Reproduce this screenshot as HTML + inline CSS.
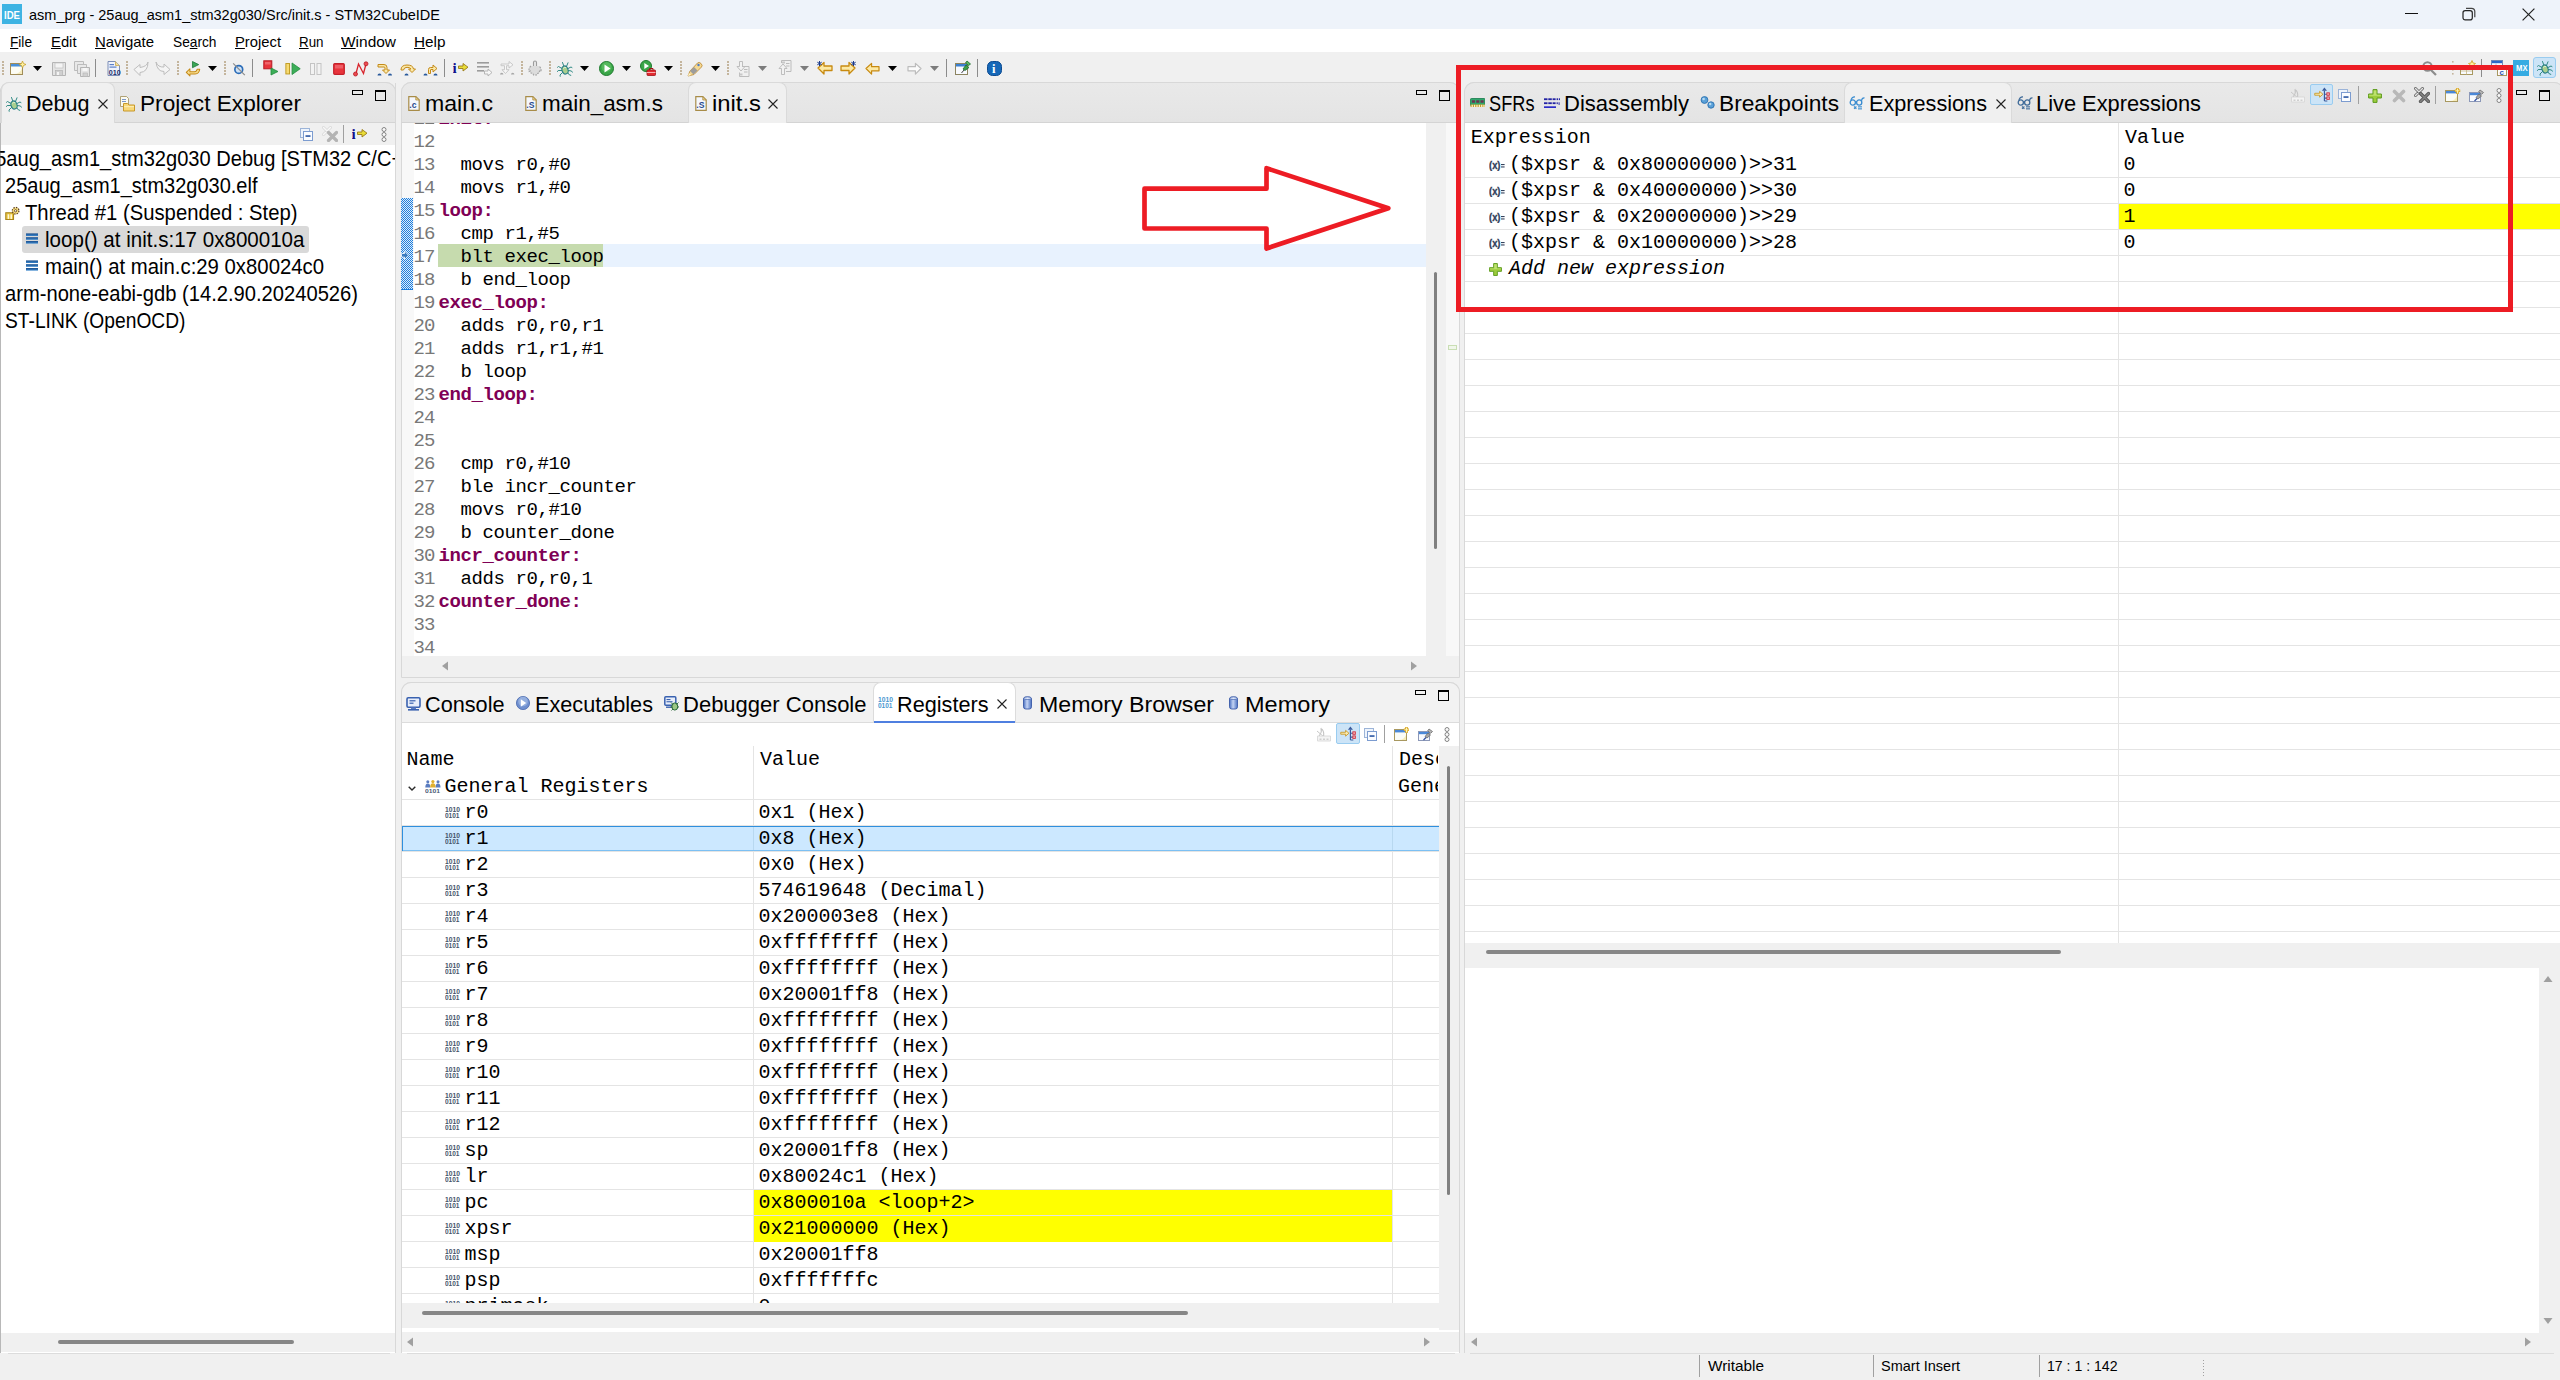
<!DOCTYPE html><html><head><meta charset="utf-8"><title>STM32CubeIDE</title><style>
html,body{margin:0;padding:0;overflow:hidden;}
#app{left:0;top:0;width:2560px;height:1380px;overflow:hidden;background:#f0f0f0;}
body{width:2560px;height:1380px;overflow:hidden;background:#f0f0f0;font-family:"Liberation Sans",sans-serif;position:relative;}
div,span.t,svg{position:absolute;box-sizing:border-box;}
span.t{white-space:pre;display:block;}
span.m{font-family:"Liberation Mono",monospace;}
u{text-decoration:underline;text-underline-offset:1px;text-decoration-thickness:1px;}
</style></head><body><div id="app"><div style="left:0px;top:0px;width:2560px;height:29px;background:#eef3fa;"></div><div style="left:2px;top:4px;width:20px;height:20px;background:#3db3e3;"></div><span class="t" style="left:4px;top:8.52px;height:13px;line-height:13px;font-size:10px;color:#fff;font-weight:700;transform:scaleX(0.9597);transform-origin:0 0;">IDE</span><span class="t" style="left:29px;top:4.50px;height:20px;line-height:20px;font-size:15px;color:#000;transform:scaleX(0.9666);transform-origin:0 0;">asm_prg - 25aug_asm1_stm32g030/Src/init.s - STM32CubeIDE</span><div style="left:2405px;top:13px;width:12.5px;height:1.2px;background:#111;"></div><svg style="left:2462px;top:7px;" width="14" height="14" viewBox="0 0 14 14"><rect x="1" y="3.600" width="9.300" height="9.300" rx="2.200" fill="none" stroke="#222" stroke-width="1.200"/><path d="M4 1.300h5.500a3.300 3.300 0 0 1 3.300 3.300v5.600" fill="none" stroke="#444" stroke-width="1.200"/></svg><svg style="left:2521.5px;top:7.5px;" width="13" height="13" viewBox="0 0 13 13"><path d="M0.600 0.600L12.400 12.400M12.400 0.600L0.600 12.400" stroke="#222" stroke-width="1.200"/></svg><div style="left:0px;top:29px;width:2560px;height:23px;background:#fff;"></div><span class="t" style="left:9.5px;top:32.00px;height:20px;line-height:20px;font-size:15px;color:#000;transform:scaleX(0.9096);transform-origin:0 0;"><u>F</u>ile</span><span class="t" style="left:50.5px;top:32.00px;height:20px;line-height:20px;font-size:15px;color:#000;transform:scaleX(0.9861);transform-origin:0 0;"><u>E</u>dit</span><span class="t" style="left:94.5px;top:32.00px;height:20px;line-height:20px;font-size:15px;color:#000;transform:scaleX(0.9963);transform-origin:0 0;"><u>N</u>avigate</span><span class="t" style="left:172.5px;top:32.00px;height:20px;line-height:20px;font-size:15px;color:#000;transform:scaleX(0.9149);transform-origin:0 0;">Se<u>a</u>rch</span><span class="t" style="left:234.5px;top:32.00px;height:20px;line-height:20px;font-size:15px;color:#000;transform:scaleX(0.9849);transform-origin:0 0;"><u>P</u>roject</span><span class="t" style="left:298.5px;top:32.00px;height:20px;line-height:20px;font-size:15px;color:#000;transform:scaleX(0.8899);transform-origin:0 0;"><u>R</u>un</span><span class="t" style="left:341px;top:32.00px;height:20px;line-height:20px;font-size:15px;color:#000;transform:scaleX(1.0304);transform-origin:0 0;"><u>W</u>indow</span><span class="t" style="left:414px;top:32.00px;height:20px;line-height:20px;font-size:15px;color:#000;transform:scaleX(1.0202);transform-origin:0 0;"><u>H</u>elp</span><div style="left:0px;top:52px;width:2560px;height:30px;background:#f0f0f0;"></div><svg style="left:2px;top:61px;" width="2" height="14" viewBox="0 0 2 14"><rect x="0" y="0" width="2" height="2" fill="#c4b59d"/><rect x="0" y="3" width="2" height="2" fill="#c4b59d"/><rect x="0" y="6" width="2" height="2" fill="#c4b59d"/><rect x="0" y="9" width="2" height="2" fill="#c4b59d"/><rect x="0" y="12" width="2" height="2" fill="#c4b59d"/></svg><svg style="left:10px;top:60.5px;" width="16" height="16" viewBox="0 0 16 16"><rect x="0.5" y="2.5" width="12" height="11" fill="#fdfdf5" stroke="#a08c58"/><rect x="1" y="3" width="11" height="2.5" fill="#4a90d9"/><path d="M12.5 0l1 2.5 2.5 1-2.5 1-1 2.5-1-2.5-2.5-1 2.5-1z" fill="#fff3a0" stroke="#c8a030" stroke-width="0.8"/><path d="M4 13q6 0 8-6v6z" fill="#f3e6b0" opacity=".8"/></svg><svg style="left:33px;top:66px;" width="9" height="5" viewBox="0 0 9 5"><path d="M0 0h9L4.5 5z" fill="#000"/></svg><svg style="left:51px;top:60.5px;" width="16" height="16" viewBox="0 0 16 16"><path d="M1.5 1.5h13v13h-13z" fill="#e4e4e4" stroke="#b4b4b4"/><rect x="4" y="2" width="8" height="5" fill="#f4f4f4" stroke="#c0c0c0" stroke-width=".7"/><rect x="4.5" y="9.5" width="7" height="5" fill="#d0d0d0" stroke="#b4b4b4" stroke-width=".7"/><rect x="6" y="11" width="2" height="3" fill="#f4f4f4"/></svg><svg style="left:74px;top:60.5px;" width="16" height="16" viewBox="0 0 16 16"><path d="M0.5 0.5h9v9h-9z" fill="#e8e8e8" stroke="#bcbcbc"/><path d="M3.5 3.5h9v9h-9z" fill="#e8e8e8" stroke="#bcbcbc"/><path d="M6.5 6.5h9v9h-9z" fill="#e4e4e4" stroke="#b4b4b4"/><rect x="8.5" y="7" width="5" height="3" fill="#f6f6f6"/><rect x="9" y="12" width="4.5" height="3.5" fill="#d0d0d0" stroke="#b4b4b4" stroke-width=".6"/></svg><div style="left:95px;top:59px;width:1px;height:18px;background:#8c8c8c;"></div><svg style="left:106px;top:60.5px;" width="15" height="15" viewBox="0 0 14 15"><path d="M1.5 0.5h7.5l4 4v10h-11.5z" fill="#eef2fb" stroke="#7c8eb8"/><path d="M9 0.5v4h4" fill="#f4dd9a" stroke="#c8a850" stroke-width=".8"/><rect x="3" y="3" width="4.5" height="1.2" fill="#5a7fc8"/><rect x="3" y="5.5" width="7" height="1.2" fill="#5a7fc8"/><text x="2.2" y="13.6" font-family="Liberation Sans" font-weight="700" font-size="7.2" fill="#1c2f6a">010</text></svg><svg style="left:126px;top:61px;" width="2" height="14" viewBox="0 0 2 14"><rect x="0" y="0" width="2" height="2" fill="#c4b59d"/><rect x="0" y="3" width="2" height="2" fill="#c4b59d"/><rect x="0" y="6" width="2" height="2" fill="#c4b59d"/><rect x="0" y="9" width="2" height="2" fill="#c4b59d"/><rect x="0" y="12" width="2" height="2" fill="#c4b59d"/></svg><svg style="left:133px;top:61px;" width="16" height="16" viewBox="0 0 16 16"><path d="M1 8.5L7 3.5v3q7-1 8-5.5 0 10-8 10.5v3z" fill="#f4f4f4" stroke="#bdbdbd" stroke-width="1" stroke-linejoin="round"/></svg><svg style="left:155px;top:61px;" width="16" height="16" viewBox="0 0 16 16"><path d="M15 8.5L9 13.5v-3q-7 0-8-9.5 2 5.5 8 5v-3z" fill="#f4f4f4" stroke="#bdbdbd" stroke-width="1" stroke-linejoin="round"/></svg><svg style="left:177px;top:61px;" width="2" height="14" viewBox="0 0 2 14"><rect x="0" y="0" width="2" height="2" fill="#c4b59d"/><rect x="0" y="3" width="2" height="2" fill="#c4b59d"/><rect x="0" y="6" width="2" height="2" fill="#c4b59d"/><rect x="0" y="9" width="2" height="2" fill="#c4b59d"/><rect x="0" y="12" width="2" height="2" fill="#c4b59d"/></svg><svg style="left:185px;top:60.5px;" width="16" height="16" viewBox="0 0 15 15.500"><path d="M7 0.5l6 3-6 3z" fill="#3aa655" stroke="#1e7a3a" stroke-width=".8"/><path d="M4.5 7.5L1 11l3.5 3.5v-2h5q4 0 4.5-4.5h-2.5q-.5 2.5-2.5 2.5h-4.5z" fill="#f8dc8c" stroke="#c48a18" stroke-width="1" stroke-linejoin="round"/></svg><svg style="left:208px;top:66px;" width="9" height="5" viewBox="0 0 9 5"><path d="M0 0h9L4.5 5z" fill="#000"/></svg><svg style="left:224px;top:61px;" width="2" height="14" viewBox="0 0 2 14"><rect x="0" y="0" width="2" height="2" fill="#c4b59d"/><rect x="0" y="3" width="2" height="2" fill="#c4b59d"/><rect x="0" y="6" width="2" height="2" fill="#c4b59d"/><rect x="0" y="9" width="2" height="2" fill="#c4b59d"/><rect x="0" y="12" width="2" height="2" fill="#c4b59d"/></svg><svg style="left:232px;top:61.5px;" width="14" height="14" viewBox="0 0 14.500 15"><circle cx="7" cy="8" r="4.2" fill="#cfe2f6" stroke="#2a6cb8" stroke-width="1.8"/><path d="M1 1.5L13.5 14" stroke="#8c8c8c" stroke-width="1.3"/></svg><div style="left:252px;top:59px;width:1px;height:18px;background:#8c8c8c;"></div><svg style="left:262.5px;top:60px;" width="16" height="16" viewBox="0 0 16 16"><rect x="0.8" y="0.8" width="8" height="8" fill="#e8343c" stroke="#b81c24" stroke-width="1"/><rect x="2" y="2" width="5.6" height="2.5" fill="#f4787c" opacity=".7"/><path d="M8 8l7 3.5-7 3.5z" fill="#3cae58" stroke="#1f8a3c" stroke-width=".8"/></svg><svg style="left:285px;top:62px;" width="16" height="13" viewBox="0 0 16 13.500"><rect x="0.6" y="1.6" width="3.8" height="10.8" fill="#f6da72" stroke="#c09a20" stroke-width="1"/><path d="M7 1l8.5 6-8.5 6z" fill="#3cae58" stroke="#1f8a3c" stroke-width=".8"/></svg><svg style="left:310px;top:63px;" width="12" height="12" viewBox="0 0 12 12"><rect x="0.5" y="0.5" width="4" height="11" fill="#f2f2f2" stroke="#c4c4c4"/><rect x="7" y="0.5" width="4" height="11" fill="#f2f2f2" stroke="#c4c4c4"/></svg><svg style="left:332.5px;top:62.5px;" width="12" height="12" viewBox="0 0 12 12"><rect x="0.7" y="0.7" width="10.6" height="10.6" rx="1" fill="#e8343c" stroke="#c4202a" stroke-width="1.2"/><rect x="2" y="2" width="8" height="3.5" fill="#f27a80" opacity=".6"/></svg><svg style="left:353px;top:60.5px;" width="16" height="16" viewBox="0 0 16 16"><path d="M3 12.5L5.5 3l5 9.5L13 3" fill="none" stroke="#d8242c" stroke-width="1.3" stroke-linejoin="miter"/><circle cx="2.5" cy="13" r="2" fill="#ec4a50" stroke="#b81c24" stroke-width=".8"/><circle cx="13" cy="2.8" r="2" fill="#ec4a50" stroke="#b81c24" stroke-width=".8"/></svg><svg style="left:377px;top:62.5px;" width="15.5" height="13" viewBox="0 0 15.500 13"><path d="M1 1.5h6q3 0 3 3v2.5h2.5L9 10.5 5.5 7H8v-2q0-1-1-1h-6z" fill="#fae8a8" stroke="#c48a18" stroke-width="1" stroke-linejoin="round"/><path d="M0.5 12.5a2 2 0 0 1 4 0z M11 12.5a2 2 0 0 1 4 0z" fill="#2a5a9c"/></svg><svg style="left:400px;top:62.5px;" width="16" height="13" viewBox="0 0 16 13"><path d="M1 7q0-5 6-5t6.5 4H15.500L12 9.500 8.500 6h2.500q-1-1.700-4-1.700t-3.500 2.700z" fill="#fae8a8" stroke="#c48a18" stroke-width="1" stroke-linejoin="round"/><path d="M4.500 12.500a2 2 0 0 1 4 0z" fill="#2a5a9c"/></svg><svg style="left:423px;top:62.5px;" width="15.5" height="13" viewBox="0 0 15.500 13"><path d="M5.500 10.500v-4q0-2 2-2h2.500v-2.500L14 5.500 10 9v-2.500h-2q-.500 0-.500.500v3.500z" fill="#fae8a8" stroke="#c48a18" stroke-width="1" stroke-linejoin="round"/><path d="M0.500 12.500a2 2 0 0 1 4 0z M10.500 12.500a2 2 0 0 1 4 0z" fill="#2a5a9c"/></svg><div style="left:444px;top:59px;width:1px;height:18px;background:#8c8c8c;"></div><svg style="left:452.5px;top:61px;" width="16" height="13" viewBox="0 0 16 13"><text x="-0.5" y="11.5" font-family="Liberation Serif" font-weight="700" font-size="15" fill="#10108c">i</text><path d="M5.500 5h4.500v-2.500L15 6.200 10 10v-2.500h-4.500z" fill="#e8dc38" stroke="#9a7a18" stroke-width=".9" stroke-linejoin="round"/></svg><svg style="left:477px;top:60.5px;" width="16" height="16" viewBox="0 0 16 16"><rect x="0" y="1" width="12" height="1.600" fill="#9c9c9c"/><rect x="0" y="5" width="12" height="1.600" fill="#9c9c9c"/><rect x="0" y="9" width="7" height="1.600" fill="#9c9c9c"/><path d="M7.500 10h3.500v-2L15 11.500 11 15v-2h-3.500z" fill="#f6f6f6" stroke="#b0b0b0" stroke-width=".9"/></svg><svg style="left:499.5px;top:61px;" width="16" height="15" viewBox="0 0 16 15"><path d="M1 3h8v-2.500L13 3.800 9 7v-2.300h-2.500v4h2.500l-3.500 3.800L2 8.700h2.500v-4h-3.500z" fill="#f6f6f6" stroke="#c4c4c4" stroke-width=".9"/><path d="M0 13.500a1.700 1.700 0 0 1 3.400 0z M11 13.500a1.700 1.700 0 0 1 3.400 0z" fill="#a8a8a8"/></svg><svg style="left:521px;top:61px;" width="2" height="14" viewBox="0 0 2 14"><rect x="0" y="0" width="2" height="2" fill="#c4b59d"/><rect x="0" y="3" width="2" height="2" fill="#c4b59d"/><rect x="0" y="6" width="2" height="2" fill="#c4b59d"/><rect x="0" y="9" width="2" height="2" fill="#c4b59d"/><rect x="0" y="12" width="2" height="2" fill="#c4b59d"/></svg><svg style="left:527.5px;top:60px;" width="16" height="16" viewBox="0 0 16 16"><path d="M5.500 9v-6.500a1.500 1.500 0 0 1 3 0v6.500" fill="#e8e8e8" stroke="#9c9c9c" stroke-width="1.100"/><path d="M3 6q-2.500 2-2 5.500l1.500-.500.500 2 2 .500.500 1.500h3l.500-1.500 2-.500.500-2 1.500.500q.500-3.500-2-5.500" fill="#dcdcdc" stroke="#a4a4a4" stroke-width="1.100" stroke-dasharray="2 1"/></svg><svg style="left:549px;top:61px;" width="2" height="14" viewBox="0 0 2 14"><rect x="0" y="0" width="2" height="2" fill="#c4b59d"/><rect x="0" y="3" width="2" height="2" fill="#c4b59d"/><rect x="0" y="6" width="2" height="2" fill="#c4b59d"/><rect x="0" y="9" width="2" height="2" fill="#c4b59d"/><rect x="0" y="12" width="2" height="2" fill="#c4b59d"/></svg><svg style="left:557px;top:60.5px;" width="16" height="16" viewBox="0 0 16 16"><g stroke="#2f8a84" stroke-width="1" fill="none" stroke-linecap="round"><path d="M7 5.500L5.500 1.500M9.500 5.500L11 1.800M5 7.500L1.500 5.500l-1 .8M4.800 9.500H1.200l-.7 1M5.500 11.500L3 14l.2 1.300M11 7.500l3-1.500 1 .6M11.300 9.500l3.200.5.800 1.200M10.500 11.500l2 2.500 1.300.300"/></g><ellipse cx="8" cy="9" rx="3" ry="4.100" transform="rotate(-20 8 9)" fill="#a9cf8e" stroke="#2a7f86" stroke-width="1.100"/><path d="M6.300 7.500q1.200-1.800 3-.800" stroke="#e6f4d8" stroke-width=".9" fill="none"/></svg><svg style="left:580px;top:66px;" width="9" height="5" viewBox="0 0 9 5"><path d="M0 0h9L4.5 5z" fill="#000"/></svg><svg style="left:598.5px;top:60.5px;" width="15" height="15" viewBox="0 0 15 15"><circle cx="7.500" cy="7.500" r="7" fill="#3aa648" stroke="#1e7a2e" stroke-width="1"/><circle cx="7.500" cy="6" r="5" fill="#6cc870" opacity=".55"/><path d="M5.500 3.500l6 4-6 4z" fill="#fff"/></svg><svg style="left:622px;top:66px;" width="9" height="5" viewBox="0 0 9 5"><path d="M0 0h9L4.5 5z" fill="#000"/></svg><svg style="left:640px;top:60px;" width="16" height="16" viewBox="0 0 16 16"><circle cx="6" cy="6" r="5.500" fill="#3aa648" stroke="#1e7a2e" stroke-width="1"/><path d="M4.300 3l4.700 3-4.700 3z" fill="#fff"/><rect x="7" y="10" width="8.500" height="5.500" rx=".8" fill="#e22a30" stroke="#a01018" stroke-width=".8"/><path d="M9.500 10v-1.500h3.500v1.500" fill="none" stroke="#a01018" stroke-width="1"/><rect x="7" y="12" width="8.500" height="1" fill="#f8b0b0"/></svg><svg style="left:664px;top:66px;" width="9" height="5" viewBox="0 0 9 5"><path d="M0 0h9L4.5 5z" fill="#000"/></svg><svg style="left:680px;top:61px;" width="2" height="14" viewBox="0 0 2 14"><rect x="0" y="0" width="2" height="2" fill="#c4b59d"/><rect x="0" y="3" width="2" height="2" fill="#c4b59d"/><rect x="0" y="6" width="2" height="2" fill="#c4b59d"/><rect x="0" y="9" width="2" height="2" fill="#c4b59d"/><rect x="0" y="12" width="2" height="2" fill="#c4b59d"/></svg><svg style="left:687px;top:60.5px;" width="16" height="16" viewBox="0 0 16 16"><path d="M1 15l2-5 7.500-8q1.500-1.500 3.500.500t.500 3.500l-7.500 7.500z" fill="#f4d890" stroke="#c09040" stroke-width=".9"/><path d="M3 10l3.500 3.500 4-4-3.500-3.500z" fill="#9c9c9c"/><path d="M1 15l1-3 2 2z" fill="#fff8d0"/><circle cx="11.500" cy="4" r="1.200" fill="#4a7ac8"/></svg><svg style="left:711px;top:66px;" width="9" height="5" viewBox="0 0 9 5"><path d="M0 0h9L4.5 5z" fill="#000"/></svg><svg style="left:727px;top:61px;" width="2" height="14" viewBox="0 0 2 14"><rect x="0" y="0" width="2" height="2" fill="#c4b59d"/><rect x="0" y="3" width="2" height="2" fill="#c4b59d"/><rect x="0" y="6" width="2" height="2" fill="#c4b59d"/><rect x="0" y="9" width="2" height="2" fill="#c4b59d"/><rect x="0" y="12" width="2" height="2" fill="#c4b59d"/></svg><svg style="left:735px;top:60.5px;" width="16" height="16" viewBox="0 0 16 16"><path d="M4.500 0.500h3v5h2.500l-4 4.500-4-4.500h2.500z" fill="#f2f2f2" stroke="#b8b8b8" stroke-width=".9"/><path d="M7 5.500h7v10h-9.500v-4" fill="none" stroke="#bcbcbc" stroke-width="1"/><rect x="9" y="8" width="3.500" height="1" fill="#bcbcbc"/><rect x="9" y="10.500" width="3.500" height="1" fill="#bcbcbc"/><rect x="4.500" y="12.500" width="3" height="2" fill="#c8c8c8"/></svg><svg style="left:758px;top:66px;" width="9" height="5" viewBox="0 0 9 5"><path d="M0 0h9L4.5 5z" fill="#7c7c7c"/></svg><svg style="left:777px;top:60px;" width="16" height="15" viewBox="0 0 16 15"><path d="M4.500 14.500h3v-6h2.500l-4-4.500-4 4.500h2.500z" fill="#f2f2f2" stroke="#b8b8b8" stroke-width=".9"/><path d="M4.500 3v-2.500h9.500v11h-5" fill="none" stroke="#bcbcbc" stroke-width="1"/><rect x="9" y="3" width="3.500" height="1" fill="#bcbcbc"/><rect x="9" y="5.500" width="3.500" height="1" fill="#bcbcbc"/><rect x="5" y="1.500" width="3" height="2" fill="#c8c8c8"/></svg><svg style="left:800px;top:66px;" width="9" height="5" viewBox="0 0 9 5"><path d="M0 0h9L4.5 5z" fill="#7c7c7c"/></svg><svg style="left:817px;top:61px;" width="16" height="14" viewBox="0 0 16 14"><path d="M1 7L7 1.500v3.500h8v4.500h-8v3.500z" fill="#fce9a4" stroke="#c88a10" stroke-width="1.300" stroke-linejoin="round"/><g stroke="#1c3c8c" stroke-width="1"><path d="M2.5 0v5M0.2999999999999998 1.200l4.400 2.600M4.7 1.200l-4.400 2.600"/></g></svg><svg style="left:840px;top:61px;" width="16" height="14" viewBox="0 0 16 14"><path d="M15 7L9 1.500v3.500h-8v4.500h8v3.500z" fill="#fce9a4" stroke="#c88a10" stroke-width="1.300" stroke-linejoin="round"/><g stroke="#1c3c8c" stroke-width="1"><path d="M13.5 0v5M11.3 1.200l4.400 2.600M15.7 1.200l-4.400 2.600"/></g></svg><svg style="left:865px;top:62px;" width="15" height="13" viewBox="0 0 16 14"><path d="M1 7L7 1.500v3.500h8v4.500h-8v3.500z" fill="#fce9a4" stroke="#c88a10" stroke-width="1.300" stroke-linejoin="round"/></svg><svg style="left:888px;top:66px;" width="9" height="5" viewBox="0 0 9 5"><path d="M0 0h9L4.5 5z" fill="#000"/></svg><svg style="left:907px;top:62px;" width="15" height="13" viewBox="0 0 16 14"><path d="M15 7L9 1.500v3.500h-8v4.500h8v3.500z" fill="#fbfbfb" stroke="#bcbcbc" stroke-width="1.300" stroke-linejoin="round"/></svg><svg style="left:930px;top:66px;" width="9" height="5" viewBox="0 0 9 5"><path d="M0 0h9L4.5 5z" fill="#7c7c7c"/></svg><div style="left:946px;top:59px;width:1px;height:18px;background:#8c8c8c;"></div><svg style="left:955px;top:60px;" width="16" height="16" viewBox="0 0 16 16"><rect x="0.500" y="3.500" width="12" height="11" fill="#f8fafe" stroke="#8c8460"/><rect x="1" y="4" width="11" height="2.500" fill="#3c80d0"/><path d="M8 9l3-4 3 2.500-4 3z" fill="#3ca048" stroke="#1c6a2c" stroke-width=".8"/><path d="M12 1l3.500 3-2 1.500-3-2.500z" fill="#58b860" stroke="#1c6a2c" stroke-width=".8"/><path d="M9 10l-2.500 3" stroke="#444" stroke-width="1"/></svg><div style="left:977px;top:59px;width:1px;height:18px;background:#8c8c8c;"></div><svg style="left:987px;top:60.5px;" width="15" height="15" viewBox="0 0 15 15"><rect x="0.500" y="0.500" width="14" height="14" rx="5" fill="#1668b8" stroke="#0c4a90" stroke-width="1"/><text x="5" y="12" font-family="Liberation Serif" font-weight="700" font-size="12.500" fill="#fff">i</text></svg><div style="left:0px;top:82px;width:396px;height:1271px;background:#fff;border:1px solid #d8d8d8;border-left-color:#b8b8b8;border-bottom:none;border-radius:10px 10px 0 0;"></div><div style="left:0px;top:82px;width:396px;height:41px;background:linear-gradient(#e9e9e9,#e4e4e4);border:1px solid #d8d8d8;border-bottom:1px solid #d4d4d4;border-radius:10px 10px 0 0;"></div><div style="left:1px;top:82px;width:114px;height:41px;background:#f0f0f0;border:1px solid #dadada;border-bottom:none;border-radius:8px 8px 0 0;"></div><span class="t" style="left:25.5px;top:89.01px;height:29px;line-height:29px;font-size:22px;color:#000;transform:scaleX(0.9793);transform-origin:0 0;">Debug</span><svg style="left:98px;top:98.5px;" width="10" height="10" viewBox="0 0 10 10"><path d="M0.5 0.5L9.5 9.5M9.5 0.5L0.5 9.5" stroke="#222" stroke-width="1.1"/></svg><span class="t" style="left:139.5px;top:89.01px;height:29px;line-height:29px;font-size:22px;color:#000;transform:scaleX(1.0287);transform-origin:0 0;">Project Explorer</span><div style="left:352px;top:89.5px;width:11px;height:5px;border:1.2px solid #000;"></div><div style="left:375px;top:89.5px;width:11px;height:11px;border:1.2px solid #000;border-top-width:2.2px;"></div><div style="left:1px;top:123px;width:394px;height:22px;background:#f0f0f0;"></div><span class="t" style="left:-16.2px;top:145.00px;height:28px;line-height:28px;font-size:21.5px;color:#000;transform:scaleX(0.934);transform-origin:0 0;clip-path:inset(0 0 0 17.3px);">25aug_asm1_stm32g030 Debug [STM32 C/C++ Application]</span><span class="t" style="left:5px;top:172.00px;height:28px;line-height:28px;font-size:21.5px;color:#000;transform:scaleX(0.9306);transform-origin:0 0;">25aug_asm1_stm32g030.elf</span><span class="t" style="left:25px;top:199.00px;height:28px;line-height:28px;font-size:21.5px;color:#000;transform:scaleX(0.9421);transform-origin:0 0;">Thread #1 (Suspended : Step)</span><div style="left:22px;top:226px;width:287px;height:27px;background:#d9d9d9;border-radius:3px;"></div><span class="t" style="left:45px;top:226.00px;height:28px;line-height:28px;font-size:21.5px;color:#000;transform:scaleX(0.9564);transform-origin:0 0;">loop() at init.s:17 0x800010a</span><span class="t" style="left:45px;top:253.00px;height:28px;line-height:28px;font-size:21.5px;color:#000;transform:scaleX(0.9452);transform-origin:0 0;">main() at main.c:29 0x80024c0</span><span class="t" style="left:5px;top:280.00px;height:28px;line-height:28px;font-size:21.5px;color:#000;transform:scaleX(0.9375);transform-origin:0 0;">arm-none-eabi-gdb (14.2.90.20240526)</span><span class="t" style="left:5px;top:307.00px;height:28px;line-height:28px;font-size:21.5px;color:#000;transform:scaleX(0.8939);transform-origin:0 0;">ST-LINK (OpenOCD)</span><div style="left:1px;top:1333px;width:394px;height:19px;background:#f0f0f0;"></div><div style="left:58px;top:1340px;width:236px;height:4px;background:#868686;border-radius:2px;"></div><div style="left:395px;top:123px;width:6px;height:1230px;background:#f0f0f0;"></div><div style="left:395px;top:83px;width:1px;height:1270px;background:#d8d8d8;"></div><div style="left:401px;top:82px;width:1059px;height:596px;background:#fff;border:1px solid #d8d8d8;border-radius:10px 10px 0 0;"></div><div style="left:401px;top:82px;width:1059px;height:41px;background:linear-gradient(#e9e9e9,#e4e4e4);border:1px solid #d8d8d8;border-bottom:1px solid #d4d4d4;border-radius:10px 10px 0 0;"></div><div style="left:688px;top:82px;width:99px;height:41px;background:#f0f0f0;border:1px solid #dadada;border-bottom:none;border-radius:8px 8px 0 0;"></div><span class="t" style="left:424.5px;top:89.01px;height:29px;line-height:29px;font-size:22px;color:#000;transform:scaleX(1.0494);transform-origin:0 0;">main.c</span><span class="t" style="left:541.5px;top:89.01px;height:29px;line-height:29px;font-size:22px;color:#000;transform:scaleX(1.0203);transform-origin:0 0;">main_asm.s</span><span class="t" style="left:712px;top:89.01px;height:29px;line-height:29px;font-size:22px;color:#000;transform:scaleX(1.0829);transform-origin:0 0;">init.s</span><svg style="left:768px;top:98.5px;" width="10" height="10" viewBox="0 0 10 10"><path d="M0.5 0.5L9.5 9.5M9.5 0.5L0.5 9.5" stroke="#222" stroke-width="1.1"/></svg><div style="left:1416px;top:89.5px;width:11px;height:5px;border:1.2px solid #000;"></div><div style="left:1439px;top:89.5px;width:11px;height:11px;border:1.2px solid #000;border-top-width:2.2px;"></div><div style="left:402px;top:123px;width:1057px;height:533px;background:#fff;"></div><div style="left:402px;top:123px;width:12px;height:533px;background:#f8f8f8;"></div><div style="left:1426px;top:123px;width:20px;height:533px;background:#f0f0f0;"></div><div style="left:1446px;top:123px;width:13px;height:533px;background:#f8f8f8;"></div><div style="left:1434px;top:272px;width:3px;height:277px;background:#808080;border-radius:1.5px;"></div><div style="left:1448px;top:345px;width:9px;height:5px;background:#f0f6ea;border:1px solid #c9deb4;"></div><div style="left:438px;top:244px;width:988px;height:23px;background:#e8f2fe;"></div><div style="left:438px;top:244px;width:165px;height:23px;background:#c6dbae;"></div><div style="left:401px;top:198px;width:12px;height:92px;background:repeating-conic-gradient(#1f7edc 0% 25%, #dcecfb 0% 50%) 0 0/2px 2px;"></div><div style="left:401px;top:289px;width:12px;height:1px;background:#1f7edc;"></div><svg style="left:400.5px;top:249.5px;" width="8" height="11" viewBox="0 0 8 11"><path d="M0.5 3.5h3v-2.6l4 4.4-4 4.4v-2.600h-3z" fill="#3b7cc0" stroke="#eef5fd" stroke-width="0.9"/></svg><span class="t m" style="left:413.5px;top:107.01px;height:25px;line-height:25px;font-size:19px;color:#787878;clip-path:inset(16.1px 0 0 0);letter-spacing:-1.000px;">11</span><span class="t m" style="left:438.5px;top:107.01px;height:25px;line-height:25px;font-size:19px;color:#7f0055;font-weight:700;clip-path:inset(16.1px 0 0 0);letter-spacing:-0.400px;">init:</span><span class="t m" style="left:413.5px;top:130.01px;height:25px;line-height:25px;font-size:19px;color:#787878;letter-spacing:-1.000px;">12</span><span class="t m" style="left:413.5px;top:153.01px;height:25px;line-height:25px;font-size:19px;color:#787878;letter-spacing:-1.000px;">13</span><span class="t m" style="left:438.5px;top:153.01px;height:25px;line-height:25px;font-size:19px;color:#000;letter-spacing:-0.400px;">  movs r0,#0</span><span class="t m" style="left:413.5px;top:176.01px;height:25px;line-height:25px;font-size:19px;color:#787878;letter-spacing:-1.000px;">14</span><span class="t m" style="left:438.5px;top:176.01px;height:25px;line-height:25px;font-size:19px;color:#000;letter-spacing:-0.400px;">  movs r1,#0</span><span class="t m" style="left:413.5px;top:199.01px;height:25px;line-height:25px;font-size:19px;color:#787878;letter-spacing:-1.000px;">15</span><span class="t m" style="left:438.5px;top:199.01px;height:25px;line-height:25px;font-size:19px;color:#7f0055;font-weight:700;letter-spacing:-0.400px;">loop:</span><span class="t m" style="left:413.5px;top:222.01px;height:25px;line-height:25px;font-size:19px;color:#787878;letter-spacing:-1.000px;">16</span><span class="t m" style="left:438.5px;top:222.01px;height:25px;line-height:25px;font-size:19px;color:#000;letter-spacing:-0.400px;">  cmp r1,#5</span><span class="t m" style="left:413.5px;top:245.01px;height:25px;line-height:25px;font-size:19px;color:#787878;letter-spacing:-1.000px;">17</span><span class="t m" style="left:438.5px;top:245.01px;height:25px;line-height:25px;font-size:19px;color:#000;letter-spacing:-0.400px;">  blt exec_loop</span><span class="t m" style="left:413.5px;top:268.01px;height:25px;line-height:25px;font-size:19px;color:#787878;letter-spacing:-1.000px;">18</span><span class="t m" style="left:438.5px;top:268.01px;height:25px;line-height:25px;font-size:19px;color:#000;letter-spacing:-0.400px;">  b end_loop</span><span class="t m" style="left:413.5px;top:291.01px;height:25px;line-height:25px;font-size:19px;color:#787878;letter-spacing:-1.000px;">19</span><span class="t m" style="left:438.5px;top:291.01px;height:25px;line-height:25px;font-size:19px;color:#7f0055;font-weight:700;letter-spacing:-0.400px;">exec_loop:</span><span class="t m" style="left:413.5px;top:314.01px;height:25px;line-height:25px;font-size:19px;color:#787878;letter-spacing:-1.000px;">20</span><span class="t m" style="left:438.5px;top:314.01px;height:25px;line-height:25px;font-size:19px;color:#000;letter-spacing:-0.400px;">  adds r0,r0,r1</span><span class="t m" style="left:413.5px;top:337.01px;height:25px;line-height:25px;font-size:19px;color:#787878;letter-spacing:-1.000px;">21</span><span class="t m" style="left:438.5px;top:337.01px;height:25px;line-height:25px;font-size:19px;color:#000;letter-spacing:-0.400px;">  adds r1,r1,#1</span><span class="t m" style="left:413.5px;top:360.01px;height:25px;line-height:25px;font-size:19px;color:#787878;letter-spacing:-1.000px;">22</span><span class="t m" style="left:438.5px;top:360.01px;height:25px;line-height:25px;font-size:19px;color:#000;letter-spacing:-0.400px;">  b loop</span><span class="t m" style="left:413.5px;top:383.01px;height:25px;line-height:25px;font-size:19px;color:#787878;letter-spacing:-1.000px;">23</span><span class="t m" style="left:438.5px;top:383.01px;height:25px;line-height:25px;font-size:19px;color:#7f0055;font-weight:700;letter-spacing:-0.400px;">end_loop:</span><span class="t m" style="left:413.5px;top:406.01px;height:25px;line-height:25px;font-size:19px;color:#787878;letter-spacing:-1.000px;">24</span><span class="t m" style="left:413.5px;top:429.01px;height:25px;line-height:25px;font-size:19px;color:#787878;letter-spacing:-1.000px;">25</span><span class="t m" style="left:413.5px;top:452.01px;height:25px;line-height:25px;font-size:19px;color:#787878;letter-spacing:-1.000px;">26</span><span class="t m" style="left:438.5px;top:452.01px;height:25px;line-height:25px;font-size:19px;color:#000;letter-spacing:-0.400px;">  cmp r0,#10</span><span class="t m" style="left:413.5px;top:475.01px;height:25px;line-height:25px;font-size:19px;color:#787878;letter-spacing:-1.000px;">27</span><span class="t m" style="left:438.5px;top:475.01px;height:25px;line-height:25px;font-size:19px;color:#000;letter-spacing:-0.400px;">  ble incr_counter</span><span class="t m" style="left:413.5px;top:498.01px;height:25px;line-height:25px;font-size:19px;color:#787878;letter-spacing:-1.000px;">28</span><span class="t m" style="left:438.5px;top:498.01px;height:25px;line-height:25px;font-size:19px;color:#000;letter-spacing:-0.400px;">  movs r0,#10</span><span class="t m" style="left:413.5px;top:521.01px;height:25px;line-height:25px;font-size:19px;color:#787878;letter-spacing:-1.000px;">29</span><span class="t m" style="left:438.5px;top:521.01px;height:25px;line-height:25px;font-size:19px;color:#000;letter-spacing:-0.400px;">  b counter_done</span><span class="t m" style="left:413.5px;top:544.01px;height:25px;line-height:25px;font-size:19px;color:#787878;letter-spacing:-1.000px;">30</span><span class="t m" style="left:438.5px;top:544.01px;height:25px;line-height:25px;font-size:19px;color:#7f0055;font-weight:700;letter-spacing:-0.400px;">incr_counter:</span><span class="t m" style="left:413.5px;top:567.01px;height:25px;line-height:25px;font-size:19px;color:#787878;letter-spacing:-1.000px;">31</span><span class="t m" style="left:438.5px;top:567.01px;height:25px;line-height:25px;font-size:19px;color:#000;letter-spacing:-0.400px;">  adds r0,r0,1</span><span class="t m" style="left:413.5px;top:590.01px;height:25px;line-height:25px;font-size:19px;color:#787878;letter-spacing:-1.000px;">32</span><span class="t m" style="left:438.5px;top:590.01px;height:25px;line-height:25px;font-size:19px;color:#7f0055;font-weight:700;letter-spacing:-0.400px;">counter_done:</span><span class="t m" style="left:413.5px;top:613.01px;height:25px;line-height:25px;font-size:19px;color:#787878;letter-spacing:-1.000px;">33</span><span class="t m" style="left:413.5px;top:636.01px;height:25px;line-height:25px;font-size:19px;color:#787878;letter-spacing:-1.000px;">34</span><div style="left:402px;top:656px;width:1024px;height:21px;background:#f0f0f0;"></div><svg style="left:441px;top:661px;" width="8" height="10" viewBox="0 0 8 10"><path d="M7 0.5L1 5l6 4.5z" fill="#a0a0a0"/></svg><svg style="left:1410px;top:661px;" width="8" height="10" viewBox="0 0 8 10"><path d="M1 0.5L7 5l-6 4.5z" fill="#a0a0a0"/></svg><div style="left:1426px;top:656px;width:33px;height:21px;background:#f0f0f0;"></div><div style="left:401px;top:682px;width:1059px;height:671px;background:#fff;border:1px solid #d8d8d8;border-bottom:none;border-radius:10px 10px 0 0;"></div><div style="left:401px;top:682px;width:1059px;height:41px;background:#f2f2f2;border:1px solid #d8d8d8;border-bottom:1px solid #dcdcdc;border-radius:10px 10px 0 0;"></div><div style="left:873px;top:682px;width:143px;height:41px;background:#fff;border:1px solid #dcdcdc;border-bottom:none;border-radius:8px 8px 0 0;"></div><div style="left:874px;top:721px;width:141px;height:2px;background:#4f7fe0;"></div><span class="t" style="left:424.5px;top:690.01px;height:29px;line-height:29px;font-size:22px;color:#000;transform:scaleX(0.9849);transform-origin:0 0;">Console</span><span class="t" style="left:535px;top:690.01px;height:29px;line-height:29px;font-size:22px;color:#000;transform:scaleX(0.9845);transform-origin:0 0;">Executables</span><span class="t" style="left:682.5px;top:690.01px;height:29px;line-height:29px;font-size:22px;color:#000;transform:scaleX(1.0002);transform-origin:0 0;">Debugger Console</span><span class="t" style="left:897px;top:690.01px;height:29px;line-height:29px;font-size:22px;color:#000;transform:scaleX(0.9847);transform-origin:0 0;">Registers</span><svg style="left:997px;top:699px;" width="10" height="10" viewBox="0 0 10 10"><path d="M0.5 0.5L9.5 9.5M9.5 0.5L0.5 9.5" stroke="#222" stroke-width="1.1"/></svg><span class="t" style="left:1039px;top:690.01px;height:29px;line-height:29px;font-size:22px;color:#000;transform:scaleX(1.0526);transform-origin:0 0;">Memory Browser</span><span class="t" style="left:1245px;top:690.01px;height:29px;line-height:29px;font-size:22px;color:#000;transform:scaleX(1.0698);transform-origin:0 0;">Memory</span><div style="left:1415px;top:689.5px;width:11px;height:5px;border:1.2px solid #000;"></div><div style="left:1438px;top:689.5px;width:11px;height:11px;border:1.2px solid #000;border-top-width:2.2px;"></div><div style="left:402px;top:723px;width:1057px;height:23px;background:#fff;"></div><div style="left:402px;top:746px;width:1037px;height:557px;background:#fff;"></div><div style="left:1439px;top:746px;width:20px;height:584px;background:#f0f0f0;"></div><div style="left:1447px;top:766px;width:3px;height:429px;background:#808080;border-radius:1.5px;"></div><div style="left:753px;top:746px;width:1px;height:557px;background:#e4e4e4;"></div><div style="left:1392px;top:746px;width:1px;height:557px;background:#e4e4e4;"></div><div style="left:402px;top:799px;width:1037px;height:1px;background:#e4e4e4;"></div><div style="left:402px;top:825px;width:1037px;height:1px;background:#e4e4e4;"></div><div style="left:402px;top:851px;width:1037px;height:1px;background:#e4e4e4;"></div><div style="left:402px;top:877px;width:1037px;height:1px;background:#e4e4e4;"></div><div style="left:402px;top:903px;width:1037px;height:1px;background:#e4e4e4;"></div><div style="left:402px;top:929px;width:1037px;height:1px;background:#e4e4e4;"></div><div style="left:402px;top:955px;width:1037px;height:1px;background:#e4e4e4;"></div><div style="left:402px;top:981px;width:1037px;height:1px;background:#e4e4e4;"></div><div style="left:402px;top:1007px;width:1037px;height:1px;background:#e4e4e4;"></div><div style="left:402px;top:1033px;width:1037px;height:1px;background:#e4e4e4;"></div><div style="left:402px;top:1059px;width:1037px;height:1px;background:#e4e4e4;"></div><div style="left:402px;top:1085px;width:1037px;height:1px;background:#e4e4e4;"></div><div style="left:402px;top:1111px;width:1037px;height:1px;background:#e4e4e4;"></div><div style="left:402px;top:1137px;width:1037px;height:1px;background:#e4e4e4;"></div><div style="left:402px;top:1163px;width:1037px;height:1px;background:#e4e4e4;"></div><div style="left:402px;top:1189px;width:1037px;height:1px;background:#e4e4e4;"></div><div style="left:402px;top:1215px;width:1037px;height:1px;background:#e4e4e4;"></div><div style="left:402px;top:1241px;width:1037px;height:1px;background:#e4e4e4;"></div><div style="left:402px;top:1267px;width:1037px;height:1px;background:#e4e4e4;"></div><div style="left:402px;top:1293px;width:1037px;height:1px;background:#e4e4e4;"></div><div style="left:402px;top:826px;width:1037px;height:25px;background:#cce8ff;border-top:1px solid #2f8fdd;border-bottom:1px solid #7cc0f3;"></div><div style="left:753px;top:827px;width:1px;height:23px;background:#b8d8f0;"></div><div style="left:1392px;top:827px;width:1px;height:23px;background:#b8d8f0;"></div><div style="left:402px;top:826px;width:1px;height:25px;background:#2f8fdd;"></div><div style="left:754px;top:1190px;width:638px;height:25px;background:#ffff00;"></div><div style="left:754px;top:1216px;width:638px;height:26px;background:#ffff00;"></div><span class="t m" style="left:406.5px;top:747.01px;height:26px;line-height:26px;font-size:20px;color:#000;">Name</span><span class="t m" style="left:760px;top:747.01px;height:26px;line-height:26px;font-size:20px;color:#000;">Value</span><span class="t m" style="left:1399px;top:747.01px;height:26px;line-height:26px;font-size:20px;color:#000;clip-path:inset(0 9px 0 0);">Desc</span><span class="t m" style="left:444.5px;top:774.01px;height:26px;line-height:26px;font-size:20px;color:#000;">General Registers</span><span class="t m" style="left:1398px;top:774.01px;height:26px;line-height:26px;font-size:20px;color:#000;clip-path:inset(0 8px 0 0);">Gene</span><span class="t m" style="left:464.5px;top:800.01px;height:26px;line-height:26px;font-size:20px;color:#000;">r0</span><span class="t m" style="left:758.5px;top:800.01px;height:26px;line-height:26px;font-size:20px;color:#000;">0x1 (Hex)</span><span class="t m" style="left:464.5px;top:826.01px;height:26px;line-height:26px;font-size:20px;color:#000;">r1</span><span class="t m" style="left:758.5px;top:826.01px;height:26px;line-height:26px;font-size:20px;color:#000;">0x8 (Hex)</span><span class="t m" style="left:464.5px;top:852.01px;height:26px;line-height:26px;font-size:20px;color:#000;">r2</span><span class="t m" style="left:758.5px;top:852.01px;height:26px;line-height:26px;font-size:20px;color:#000;">0x0 (Hex)</span><span class="t m" style="left:464.5px;top:878.01px;height:26px;line-height:26px;font-size:20px;color:#000;">r3</span><span class="t m" style="left:758.5px;top:878.01px;height:26px;line-height:26px;font-size:20px;color:#000;">574619648 (Decimal)</span><span class="t m" style="left:464.5px;top:904.01px;height:26px;line-height:26px;font-size:20px;color:#000;">r4</span><span class="t m" style="left:758.5px;top:904.01px;height:26px;line-height:26px;font-size:20px;color:#000;">0x200003e8 (Hex)</span><span class="t m" style="left:464.5px;top:930.01px;height:26px;line-height:26px;font-size:20px;color:#000;">r5</span><span class="t m" style="left:758.5px;top:930.01px;height:26px;line-height:26px;font-size:20px;color:#000;">0xffffffff (Hex)</span><span class="t m" style="left:464.5px;top:956.01px;height:26px;line-height:26px;font-size:20px;color:#000;">r6</span><span class="t m" style="left:758.5px;top:956.01px;height:26px;line-height:26px;font-size:20px;color:#000;">0xffffffff (Hex)</span><span class="t m" style="left:464.5px;top:982.01px;height:26px;line-height:26px;font-size:20px;color:#000;">r7</span><span class="t m" style="left:758.5px;top:982.01px;height:26px;line-height:26px;font-size:20px;color:#000;">0x20001ff8 (Hex)</span><span class="t m" style="left:464.5px;top:1008.01px;height:26px;line-height:26px;font-size:20px;color:#000;">r8</span><span class="t m" style="left:758.5px;top:1008.01px;height:26px;line-height:26px;font-size:20px;color:#000;">0xffffffff (Hex)</span><span class="t m" style="left:464.5px;top:1034.01px;height:26px;line-height:26px;font-size:20px;color:#000;">r9</span><span class="t m" style="left:758.5px;top:1034.01px;height:26px;line-height:26px;font-size:20px;color:#000;">0xffffffff (Hex)</span><span class="t m" style="left:464.5px;top:1060.01px;height:26px;line-height:26px;font-size:20px;color:#000;">r10</span><span class="t m" style="left:758.5px;top:1060.01px;height:26px;line-height:26px;font-size:20px;color:#000;">0xffffffff (Hex)</span><span class="t m" style="left:464.5px;top:1086.01px;height:26px;line-height:26px;font-size:20px;color:#000;">r11</span><span class="t m" style="left:758.5px;top:1086.01px;height:26px;line-height:26px;font-size:20px;color:#000;">0xffffffff (Hex)</span><span class="t m" style="left:464.5px;top:1112.01px;height:26px;line-height:26px;font-size:20px;color:#000;">r12</span><span class="t m" style="left:758.5px;top:1112.01px;height:26px;line-height:26px;font-size:20px;color:#000;">0xffffffff (Hex)</span><span class="t m" style="left:464.5px;top:1138.01px;height:26px;line-height:26px;font-size:20px;color:#000;">sp</span><span class="t m" style="left:758.5px;top:1138.01px;height:26px;line-height:26px;font-size:20px;color:#000;">0x20001ff8 (Hex)</span><span class="t m" style="left:464.5px;top:1164.01px;height:26px;line-height:26px;font-size:20px;color:#000;">lr</span><span class="t m" style="left:758.5px;top:1164.01px;height:26px;line-height:26px;font-size:20px;color:#000;">0x80024c1 (Hex)</span><span class="t m" style="left:464.5px;top:1190.01px;height:26px;line-height:26px;font-size:20px;color:#000;">pc</span><span class="t m" style="left:758.5px;top:1190.01px;height:26px;line-height:26px;font-size:20px;color:#000;">0x800010a &lt;loop+2&gt;</span><span class="t m" style="left:464.5px;top:1216.01px;height:26px;line-height:26px;font-size:20px;color:#000;">xpsr</span><span class="t m" style="left:758.5px;top:1216.01px;height:26px;line-height:26px;font-size:20px;color:#000;">0x21000000 (Hex)</span><span class="t m" style="left:464.5px;top:1242.01px;height:26px;line-height:26px;font-size:20px;color:#000;">msp</span><span class="t m" style="left:758.5px;top:1242.01px;height:26px;line-height:26px;font-size:20px;color:#000;">0x20001ff8</span><span class="t m" style="left:464.5px;top:1268.01px;height:26px;line-height:26px;font-size:20px;color:#000;">psp</span><span class="t m" style="left:758.5px;top:1268.01px;height:26px;line-height:26px;font-size:20px;color:#000;">0xfffffffc</span><span class="t m" style="left:464.5px;top:1294.01px;height:26px;line-height:26px;font-size:20px;color:#000;clip-path:inset(0 0 14px 0);">primask</span><span class="t m" style="left:758.5px;top:1294.01px;height:26px;line-height:26px;font-size:20px;color:#000;clip-path:inset(0 0 14px 0);">0</span><div style="left:402px;top:1303px;width:1037px;height:25px;background:#f0f0f0;"></div><div style="left:422px;top:1311px;width:766px;height:4px;background:#868686;border-radius:2px;"></div><div style="left:402px;top:1328px;width:1037px;height:4px;background:#fff;"></div><div style="left:402px;top:1332px;width:1057px;height:20px;background:#f0f0f0;"></div><svg style="left:406px;top:1337px;" width="8" height="10" viewBox="0 0 8 10"><path d="M7 0.5L1 5l6 4.5z" fill="#a0a0a0"/></svg><svg style="left:1423px;top:1337px;" width="8" height="10" viewBox="0 0 8 10"><path d="M1 0.5L7 5l-6 4.5z" fill="#a0a0a0"/></svg><div style="left:1464px;top:82px;width:1100px;height:1271px;background:#fff;border:1px solid #d8d8d8;border-bottom:none;border-radius:10px 10px 0 0;"></div><div style="left:1464px;top:82px;width:1100px;height:41px;background:linear-gradient(#e9e9e9,#e4e4e4);border:1px solid #d8d8d8;border-bottom:1px solid #d4d4d4;border-radius:10px 10px 0 0;"></div><div style="left:1844px;top:82px;width:168px;height:41px;background:#f0f0f0;border:1px solid #dadada;border-bottom:none;border-radius:8px 8px 0 0;"></div><span class="t" style="left:1488.5px;top:89.01px;height:29px;line-height:29px;font-size:22px;color:#000;transform:scaleX(0.8273);transform-origin:0 0;">SFRs</span><span class="t" style="left:1564px;top:89.01px;height:29px;line-height:29px;font-size:22px;color:#000;transform:scaleX(1.0024);transform-origin:0 0;">Disassembly</span><span class="t" style="left:1719px;top:89.01px;height:29px;line-height:29px;font-size:22px;color:#000;transform:scaleX(1.0328);transform-origin:0 0;">Breakpoints</span><span class="t" style="left:1869px;top:89.01px;height:29px;line-height:29px;font-size:22px;color:#000;transform:scaleX(0.9846);transform-origin:0 0;">Expressions</span><svg style="left:1996px;top:98.5px;" width="10" height="10" viewBox="0 0 10 10"><path d="M0.5 0.5L9.5 9.5M9.5 0.5L0.5 9.5" stroke="#222" stroke-width="1.1"/></svg><span class="t" style="left:2036px;top:89.01px;height:29px;line-height:29px;font-size:22px;color:#000;transform:scaleX(0.9921);transform-origin:0 0;">Live Expressions</span><div style="left:2516px;top:89.5px;width:11px;height:5px;border:1.2px solid #000;"></div><div style="left:2539px;top:89.5px;width:11px;height:11px;border:1.2px solid #000;border-top-width:2.2px;"></div><div style="left:1465px;top:123px;width:1095px;height:820px;background:#fff;"></div><div style="left:2118px;top:123px;width:1px;height:820px;background:#e4e4e4;"></div><div style="left:1465px;top:177px;width:1095px;height:1px;background:#e4e4e4;"></div><div style="left:1465px;top:203px;width:1095px;height:1px;background:#e4e4e4;"></div><div style="left:1465px;top:229px;width:1095px;height:1px;background:#e4e4e4;"></div><div style="left:1465px;top:255px;width:1095px;height:1px;background:#e4e4e4;"></div><div style="left:1465px;top:281px;width:1095px;height:1px;background:#e4e4e4;"></div><div style="left:1465px;top:307px;width:1095px;height:1px;background:#e4e4e4;"></div><div style="left:1465px;top:333px;width:1095px;height:1px;background:#e4e4e4;"></div><div style="left:1465px;top:359px;width:1095px;height:1px;background:#e4e4e4;"></div><div style="left:1465px;top:385px;width:1095px;height:1px;background:#e4e4e4;"></div><div style="left:1465px;top:411px;width:1095px;height:1px;background:#e4e4e4;"></div><div style="left:1465px;top:437px;width:1095px;height:1px;background:#e4e4e4;"></div><div style="left:1465px;top:463px;width:1095px;height:1px;background:#e4e4e4;"></div><div style="left:1465px;top:489px;width:1095px;height:1px;background:#e4e4e4;"></div><div style="left:1465px;top:515px;width:1095px;height:1px;background:#e4e4e4;"></div><div style="left:1465px;top:541px;width:1095px;height:1px;background:#e4e4e4;"></div><div style="left:1465px;top:567px;width:1095px;height:1px;background:#e4e4e4;"></div><div style="left:1465px;top:593px;width:1095px;height:1px;background:#e4e4e4;"></div><div style="left:1465px;top:619px;width:1095px;height:1px;background:#e4e4e4;"></div><div style="left:1465px;top:645px;width:1095px;height:1px;background:#e4e4e4;"></div><div style="left:1465px;top:671px;width:1095px;height:1px;background:#e4e4e4;"></div><div style="left:1465px;top:697px;width:1095px;height:1px;background:#e4e4e4;"></div><div style="left:1465px;top:723px;width:1095px;height:1px;background:#e4e4e4;"></div><div style="left:1465px;top:749px;width:1095px;height:1px;background:#e4e4e4;"></div><div style="left:1465px;top:775px;width:1095px;height:1px;background:#e4e4e4;"></div><div style="left:1465px;top:801px;width:1095px;height:1px;background:#e4e4e4;"></div><div style="left:1465px;top:827px;width:1095px;height:1px;background:#e4e4e4;"></div><div style="left:1465px;top:853px;width:1095px;height:1px;background:#e4e4e4;"></div><div style="left:1465px;top:879px;width:1095px;height:1px;background:#e4e4e4;"></div><div style="left:1465px;top:905px;width:1095px;height:1px;background:#e4e4e4;"></div><div style="left:1465px;top:931px;width:1095px;height:1px;background:#e4e4e4;"></div><div style="left:2119px;top:204px;width:441px;height:25px;background:#ffff00;"></div><span class="t m" style="left:1470.8px;top:125.01px;height:26px;line-height:26px;font-size:20px;color:#000;">Expression</span><span class="t m" style="left:2125px;top:125.01px;height:26px;line-height:26px;font-size:20px;color:#000;">Value</span><span class="t m" style="left:1509px;top:151.51px;height:26px;line-height:26px;font-size:20px;color:#000;">($xpsr &amp; 0x80000000)&gt;&gt;31</span><span class="t m" style="left:2123.5px;top:151.51px;height:26px;line-height:26px;font-size:20px;color:#000;">0</span><span class="t m" style="left:1509px;top:177.51px;height:26px;line-height:26px;font-size:20px;color:#000;">($xpsr &amp; 0x40000000)&gt;&gt;30</span><span class="t m" style="left:2123.5px;top:177.51px;height:26px;line-height:26px;font-size:20px;color:#000;">0</span><span class="t m" style="left:1509px;top:203.51px;height:26px;line-height:26px;font-size:20px;color:#000;">($xpsr &amp; 0x20000000)&gt;&gt;29</span><span class="t m" style="left:2123.5px;top:203.51px;height:26px;line-height:26px;font-size:20px;color:#000;">1</span><span class="t m" style="left:1509px;top:229.51px;height:26px;line-height:26px;font-size:20px;color:#000;">($xpsr &amp; 0x10000000)&gt;&gt;28</span><span class="t m" style="left:2123.5px;top:229.51px;height:26px;line-height:26px;font-size:20px;color:#000;">0</span><span class="t m" style="left:1509px;top:255.51px;height:26px;line-height:26px;font-size:20px;color:#000;font-style:italic;">Add new expression</span><div style="left:1465px;top:943px;width:1095px;height:25px;background:#f0f0f0;"></div><div style="left:1486px;top:950px;width:575px;height:4px;background:#868686;border-radius:2px;"></div><div style="left:1465px;top:968px;width:1074px;height:365px;background:#fff;"></div><div style="left:2539px;top:968px;width:21px;height:365px;background:#f0f0f0;"></div><svg style="left:2543px;top:975px;" width="10" height="8" viewBox="0 0 10 8"><path d="M5 1L0.5 7h9z" fill="#a0a0a0"/></svg><svg style="left:2543px;top:1317px;" width="10" height="8" viewBox="0 0 10 8"><path d="M5 7L0.5 1h9z" fill="#a0a0a0"/></svg><div style="left:1465px;top:1333px;width:1095px;height:20px;background:#f0f0f0;"></div><svg style="left:1470px;top:1337px;" width="8" height="10" viewBox="0 0 8 10"><path d="M7 0.5L1 5l6 4.5z" fill="#a0a0a0"/></svg><svg style="left:2524px;top:1337px;" width="8" height="10" viewBox="0 0 8 10"><path d="M1 0.5L7 5l-6 4.5z" fill="#a0a0a0"/></svg><div style="left:0px;top:1353px;width:2560px;height:27px;background:#f0f0f0;"></div><div style="left:8px;top:1353px;width:382px;height:1px;background:#dcdcdc;"></div><div style="left:407px;top:1353px;width:1048px;height:1px;background:#dcdcdc;"></div><div style="left:1470px;top:1353px;width:1084px;height:1px;background:#dcdcdc;"></div><div style="left:1699px;top:1355px;width:1px;height:22px;background:#a0a0a0;"></div><div style="left:1873px;top:1355px;width:1px;height:22px;background:#a0a0a0;"></div><div style="left:2039px;top:1355px;width:1px;height:22px;background:#a0a0a0;"></div><span class="t" style="left:1707.5px;top:1356.00px;height:20px;line-height:20px;font-size:15px;color:#000;transform:scaleX(1.0228);transform-origin:0 0;">Writable</span><span class="t" style="left:1881px;top:1356.00px;height:20px;line-height:20px;font-size:15px;color:#000;transform:scaleX(0.9671);transform-origin:0 0;">Smart Insert</span><span class="t" style="left:2047px;top:1356.00px;height:20px;line-height:20px;font-size:15px;color:#000;transform:scaleX(0.9392);transform-origin:0 0;">17 : 1 : 142</span><div style="left:2203px;top:1360px;width:1px;height:1px;background:#a0a0a0;"></div><div style="left:2203px;top:1363px;width:1px;height:1px;background:#a0a0a0;"></div><div style="left:2203px;top:1366px;width:1px;height:1px;background:#a0a0a0;"></div><div style="left:2203px;top:1369px;width:1px;height:1px;background:#a0a0a0;"></div><div style="left:2203px;top:1372px;width:1px;height:1px;background:#a0a0a0;"></div><div style="left:2203px;top:1375px;width:1px;height:1px;background:#a0a0a0;"></div><svg style="left:5.5px;top:95.5px;" width="16" height="16" viewBox="0 0 16 16"><g stroke="#2f8a84" stroke-width="1" fill="none" stroke-linecap="round"><path d="M7 5.500L5.500 1.500M9.500 5.500L11 1.800M5 7.500L1.500 5.500l-1 .8M4.800 9.500H1.200l-.7 1M5.500 11.500L3 14l.2 1.300M11 7.500l3-1.500 1 .6M11.300 9.500l3.200.5.800 1.200M10.500 11.500l2 2.500 1.300.300"/></g><ellipse cx="8" cy="9" rx="3" ry="4.100" transform="rotate(-20 8 9)" fill="#a9cf8e" stroke="#2a7f86" stroke-width="1.100"/><path d="M6.300 7.500q1.200-1.800 3-.800" stroke="#e6f4d8" stroke-width=".9" fill="none"/></svg><svg style="left:119px;top:95.5px;" width="16" height="16" viewBox="0 0 16 16"><path d="M1.500 0.500h6l2 2v8h-8z" fill="#fbfbf3" stroke="#a89868" stroke-width=".9"/><rect x="3" y="3" width="4" height="1" fill="#7c98c8"/><rect x="3" y="5" width="4" height="1" fill="#7c98c8"/><path d="M4.500 7.500h4l1.500 1.500h5.500v6h-11z" fill="#f8d878" stroke="#c89828" stroke-width="1"/><rect x="5" y="10" width="10" height="1.200" fill="#fcecb0"/></svg><svg style="left:300px;top:128px;" width="13" height="13" viewBox="0 0 13 13"><rect x="0.500" y="0.500" width="9" height="9" fill="#eef4fc" stroke="#9cb4d8"/><rect x="3.500" y="3.500" width="9" height="9" fill="#fafcff" stroke="#7c9cd0"/><rect x="5.500" y="7.300" width="5" height="1.500" fill="#1c4a9c"/></svg><svg style="left:322px;top:126px;" width="16" height="16" viewBox="0 0 16 16"><g stroke-linecap="round"><path d="M1.500 1.500l7 7M8.500 1.500l-7 7" stroke="#dadada" stroke-width="3"/><path d="M1.500 1.500l7 7M8.500 1.500l-7 7" stroke="#f8f8f8" stroke-width="1.400"/><path d="M6.500 6.500l8 8M14.500 6.500l-8 8" stroke="#b4b4b4" stroke-width="3.200"/></g></svg><div style="left:343px;top:125px;width:1px;height:18px;background:#a0a0a0;"></div><svg style="left:352px;top:127px;" width="16" height="13" viewBox="0 0 16 13"><text x="-0.5" y="11.5" font-family="Liberation Serif" font-weight="700" font-size="15" fill="#10108c">i</text><path d="M5.500 5h4.500v-2.500L15 6.200 10 10v-2.500h-4.500z" fill="#e8dc38" stroke="#9a7a18" stroke-width=".9" stroke-linejoin="round"/></svg><svg style="left:380.5px;top:127px;" width="6" height="15" viewBox="0 0 6 15"><circle cx="3" cy="2.500" r="2" fill="#fafafa" stroke="#787878" stroke-width=".9"/><circle cx="3" cy="7.500" r="2" fill="#fafafa" stroke="#787878" stroke-width=".9"/><circle cx="3" cy="12.500" r="2" fill="#fafafa" stroke="#787878" stroke-width=".9"/></svg><svg style="left:4.5px;top:205.5px;" width="15" height="14" viewBox="0 0 14 13.500"><rect x="0.500" y="6.500" width="7.500" height="6.500" fill="#e8c440" stroke="#a8841c" stroke-width="1"/><rect x="2.300" y="8" width="1.500" height="4.500" fill="#fff8d8"/><rect x="5" y="8" width="1.500" height="4.500" fill="#fff8d8"/><circle cx="10" cy="4.600" r="3.200" fill="#f8e080" stroke="#5c3c1c" stroke-width="1.200" stroke-dasharray="1.400 1.100"/><circle cx="10" cy="4.600" r="1.100" fill="#fff" stroke="#5c3c1c" stroke-width=".8"/></svg><svg style="left:26px;top:233px;" width="12" height="11" viewBox="0 0 12 10.600"><defs><linearGradient id="sk" x1="0" x2="0" y1="0" y2="1"><stop offset="0" stop-color="#1a4e8c"/><stop offset="1" stop-color="#3a86cc"/></linearGradient></defs><rect x="0" y="0.200" width="12" height="2.600" fill="url(#sk)"/><rect x="0" y="4" width="12" height="2.600" fill="url(#sk)"/><rect x="0" y="7.800" width="12" height="2.600" fill="url(#sk)"/></svg><svg style="left:26px;top:260px;" width="12" height="11" viewBox="0 0 12 10.600"><defs><linearGradient id="sk" x1="0" x2="0" y1="0" y2="1"><stop offset="0" stop-color="#1a4e8c"/><stop offset="1" stop-color="#3a86cc"/></linearGradient></defs><rect x="0" y="0.200" width="12" height="2.600" fill="url(#sk)"/><rect x="0" y="4" width="12" height="2.600" fill="url(#sk)"/><rect x="0" y="7.800" width="12" height="2.600" fill="url(#sk)"/></svg><svg style="left:408px;top:95.5px;" width="12" height="15" viewBox="0 0 11.600 15"><path d="M0.600 0.600h7l3.400 3.400v10.400h-10.400z" fill="#f4f7fd" stroke="#a88c48" stroke-width="1.200"/><path d="M7.600 0.600v3.400h3.400z" fill="#f0d488" stroke="#a88c48" stroke-width=".8"/><text x="1.100" y="11.600" font-family="Liberation Sans" font-weight="700" font-size="8.600" fill="#2a4a8c">.c</text></svg><svg style="left:525px;top:95.5px;" width="12" height="15" viewBox="0 0 11.600 15"><path d="M0.600 0.600h7l3.400 3.400v10.400h-10.400z" fill="#f4f7fd" stroke="#a88c48" stroke-width="1.200"/><path d="M7.600 0.600v3.400h3.400z" fill="#f0d488" stroke="#a88c48" stroke-width=".8"/><text x="1.100" y="11.600" font-family="Liberation Sans" font-weight="700" font-size="8.600" fill="#2a4a8c">.S</text></svg><svg style="left:695px;top:95.5px;" width="12" height="15" viewBox="0 0 11.600 15"><path d="M0.600 0.600h7l3.400 3.400v10.400h-10.400z" fill="#f4f7fd" stroke="#a88c48" stroke-width="1.200"/><path d="M7.600 0.600v3.400h3.400z" fill="#f0d488" stroke="#a88c48" stroke-width=".8"/><text x="1.100" y="11.600" font-family="Liberation Sans" font-weight="700" font-size="8.600" fill="#2a4a8c">.S</text></svg><svg style="left:406px;top:696.5px;" width="15" height="14" viewBox="0 0 15 14"><rect x="1" y="0.800" width="13" height="9.500" rx="1.200" fill="#e8eefa" stroke="#3a62b0" stroke-width="1.600"/><rect x="3.500" y="3.200" width="6" height="1.200" fill="#3a62b0"/><rect x="3.500" y="5.600" width="4" height="1.200" fill="#3a62b0"/><rect x="5" y="10.500" width="5" height="1.500" fill="#5a7ac0"/><rect x="2" y="12" width="11" height="1.600" fill="#3a62b0"/></svg><svg style="left:516px;top:696px;" width="14" height="14" viewBox="0 0 14 14"><circle cx="7" cy="7" r="6.600" fill="#6f8fcf" stroke="#4a6aae" stroke-width=".8"/><circle cx="7" cy="5.500" r="4.800" fill="#a4bce6" opacity=".7"/><path d="M4.800 3.200l5.400 3.800-5.400 3.800z" fill="#fff"/></svg><svg style="left:664px;top:695.5px;" width="16" height="15" viewBox="0 0 16 15"><rect x="0.800" y="0.800" width="11" height="8.500" rx="1" fill="#e8eefa" stroke="#3a62b0" stroke-width="1.500"/><rect x="2.500" y="3" width="4" height="1.100" fill="#3a62b0"/><rect x="2.500" y="5.200" width="6" height="1.100" fill="#3a62b0"/><rect x="2" y="10.500" width="7" height="1.400" fill="#3a62b0"/><ellipse cx="10.800" cy="10.500" rx="3" ry="3.600" fill="#9cc884" stroke="#2a6a3a" stroke-width="1"/><path d="M7 6.500l2 2M14.500 6.500l-2 2M6.500 11h2M13 11h2M7.500 14.500l1.500-1.500" stroke="#2a6a3a" stroke-width=".9"/></svg><svg style="left:878px;top:697px;" width="15.5" height="11.5" viewBox="0 0 15.500 11.500"><text x="0" y="5.300" font-family="Liberation Sans" font-weight="700" font-size="7.400" fill="#4a98d0" textLength="15" lengthAdjust="spacingAndGlyphs">1010</text><text x="0" y="11.300" font-family="Liberation Sans" font-weight="700" font-size="7.400" fill="#4a98d0" textLength="14.500" lengthAdjust="spacingAndGlyphs">0101</text></svg><svg style="left:1023px;top:696px;" width="9" height="14" viewBox="0 0 9 14"><defs><linearGradient id="cy" x1="0" x2="1"><stop offset="0" stop-color="#4a70c0"/><stop offset=".45" stop-color="#c4d4f4"/><stop offset="1" stop-color="#4a70c0"/></linearGradient></defs><rect x="0.500" y="1" width="8" height="12" rx="2.200" fill="url(#cy)" stroke="#3a5aa8" stroke-width=".9"/><ellipse cx="4.500" cy="2.200" rx="3.600" ry="1.300" fill="#dce6fa" stroke="#3a5aa8" stroke-width=".7"/></svg><svg style="left:1228.5px;top:696px;" width="9" height="14" viewBox="0 0 9 14"><defs><linearGradient id="cy" x1="0" x2="1"><stop offset="0" stop-color="#4a70c0"/><stop offset=".45" stop-color="#c4d4f4"/><stop offset="1" stop-color="#4a70c0"/></linearGradient></defs><rect x="0.500" y="1" width="8" height="12" rx="2.200" fill="url(#cy)" stroke="#3a5aa8" stroke-width=".9"/><ellipse cx="4.500" cy="2.200" rx="3.600" ry="1.300" fill="#dce6fa" stroke="#3a5aa8" stroke-width=".7"/></svg><svg style="left:1315.5px;top:727px;" width="16" height="15" viewBox="0 0 16 15"><path d="M2 13q0-3 2-5.500t1-6.500M6 2q3 4 1 9" fill="none" stroke="#c4c4c4" stroke-width="1.100"/><path d="M1 4l7 6" stroke="#c8c8c8" stroke-width="1"/><path d="M1.500 9h13v5h-13z" fill="#f4f4f4" stroke="#d4d4d4" stroke-width=".8"/><g fill="#cfcfcf"><rect x="3.500" y="11.500" width="2" height="1.500"/><rect x="7" y="11.500" width="2" height="1.500"/><rect x="10.500" y="11.500" width="2" height="1.500"/></g></svg><div style="left:1336px;top:723px;width:24px;height:21px;background:#cce4f7;border:1px solid #99ccf0;border-radius:2px;"></div><svg style="left:1340px;top:726px;" width="16" height="15" viewBox="0 0 16 15.500"><path d="M0.500 6.500h5v-2l3.500 3-3.500 3v-2h-5z" fill="#fcecb0" stroke="#c89828" stroke-width=".9"/><path d="M10.500 4v10.500M10.500 7.500h3M10.500 11.500h3M10.500 14.500h3" stroke="#3a5a9c" stroke-width="1.200" fill="none"/><path d="M10.500 0.500l2.600 3.500h-5.200z" fill="#3a5a9c"/><rect x="13" y="6" width="2.600" height="2.600" fill="#f8b0b0" stroke="#d03040" stroke-width=".9"/><rect x="13" y="10.200" width="2.600" height="2.600" fill="#f8b0b0" stroke="#d03040" stroke-width=".9"/></svg><svg style="left:1364px;top:728px;" width="13" height="13" viewBox="0 0 13 13"><rect x="0.500" y="0.500" width="9" height="9" fill="#eef4fc" stroke="#9cb4d8"/><rect x="3.500" y="3.500" width="9" height="9" fill="#fafcff" stroke="#7c9cd0"/><rect x="5.500" y="7.300" width="5" height="1.500" fill="#1c4a9c"/></svg><div style="left:1384px;top:725px;width:1px;height:18px;background:#a0a0a0;"></div><svg style="left:1393.5px;top:726.5px;" width="15.5" height="14" viewBox="0 0 15.500 14"><rect x="0.500" y="2.500" width="12" height="11" fill="#fbfcf6" stroke="#a89860"/><rect x="1" y="3" width="11" height="2.400" fill="#4a88d8"/><path d="M12.500 0v6M9.800 2.800h5.400" stroke="#d8a420" stroke-width="2.600"/><path d="M12.500 .6v4.800M10.400 2.800h4.200" stroke="#fff4b0" stroke-width="1"/><path d="M5 13q5 0 7-5v5z" fill="#f6e8a8" opacity=".8"/></svg><svg style="left:1417.5px;top:726.5px;" width="15" height="14" viewBox="0 0 15 14"><rect x="0.500" y="4.500" width="11" height="9" fill="#f8fafe" stroke="#8c98b8"/><rect x="1" y="5" width="10" height="2.200" fill="#4a88d8"/><path d="M7 9.500l3-3.500 2.500 2-3.500 3z" fill="#a4a4a4" stroke="#6c6c6c" stroke-width=".8"/><path d="M11 2l3.500 2.500-1.800 1.800-3-2.500z" fill="#b8b8b8" stroke="#6c6c6c" stroke-width=".8"/><path d="M8 10.500l-2.500 2.500" stroke="#2a4a9c" stroke-width="1.100"/></svg><svg style="left:1444px;top:726.5px;" width="6" height="15" viewBox="0 0 6 15"><circle cx="3" cy="2.500" r="2" fill="#fafafa" stroke="#787878" stroke-width=".9"/><circle cx="3" cy="7.500" r="2" fill="#fafafa" stroke="#787878" stroke-width=".9"/><circle cx="3" cy="12.500" r="2" fill="#fafafa" stroke="#787878" stroke-width=".9"/></svg><svg style="left:408px;top:786px;" width="8" height="5" viewBox="0 0 8 5"><path d="M0.700 0.700l3.300 3.300 3.300-3.300" fill="none" stroke="#2a2a2a" stroke-width="1.400"/></svg><svg style="left:424.5px;top:779.5px;" width="16" height="14" viewBox="0 0 16 14"><g><circle cx="2.800" cy="1.800" r="1.500" fill="#5a7cc0"/><path d="M0.300 7.500q0-4 2.500-4t2.500 4z" fill="#5a7cc0"/><circle cx="13" cy="1.800" r="1.500" fill="#5a7cc0"/><path d="M10.500 7.500q0-4 2.500-4t2.500 4z" fill="#5a7cc0"/><circle cx="7.900" cy="1.600" r="1.600" fill="#e0b030"/><path d="M5.200 7.500q0-4.200 2.700-4.200t2.700 4.200z" fill="#e0b030"/></g><text x="0" y="13.400" font-family="Liberation Sans" font-weight="700" font-size="6" fill="#4a5a74" textLength="15" lengthAdjust="spacingAndGlyphs">0101</text></svg><svg style="left:445px;top:807px;" width="15.5" height="11.5" viewBox="0 0 15.500 11.500"><text x="0" y="5.300" font-family="Liberation Sans" font-weight="700" font-size="7.400" fill="#44546a" textLength="15" lengthAdjust="spacingAndGlyphs">1010</text><text x="0" y="11.300" font-family="Liberation Sans" font-weight="700" font-size="7.400" fill="#44546a" textLength="14.500" lengthAdjust="spacingAndGlyphs">0101</text></svg><svg style="left:445px;top:833px;" width="15.5" height="11.5" viewBox="0 0 15.500 11.500"><text x="0" y="5.300" font-family="Liberation Sans" font-weight="700" font-size="7.400" fill="#44546a" textLength="15" lengthAdjust="spacingAndGlyphs">1010</text><text x="0" y="11.300" font-family="Liberation Sans" font-weight="700" font-size="7.400" fill="#44546a" textLength="14.500" lengthAdjust="spacingAndGlyphs">0101</text></svg><svg style="left:445px;top:859px;" width="15.5" height="11.5" viewBox="0 0 15.500 11.500"><text x="0" y="5.300" font-family="Liberation Sans" font-weight="700" font-size="7.400" fill="#44546a" textLength="15" lengthAdjust="spacingAndGlyphs">1010</text><text x="0" y="11.300" font-family="Liberation Sans" font-weight="700" font-size="7.400" fill="#44546a" textLength="14.500" lengthAdjust="spacingAndGlyphs">0101</text></svg><svg style="left:445px;top:885px;" width="15.5" height="11.5" viewBox="0 0 15.500 11.500"><text x="0" y="5.300" font-family="Liberation Sans" font-weight="700" font-size="7.400" fill="#44546a" textLength="15" lengthAdjust="spacingAndGlyphs">1010</text><text x="0" y="11.300" font-family="Liberation Sans" font-weight="700" font-size="7.400" fill="#44546a" textLength="14.500" lengthAdjust="spacingAndGlyphs">0101</text></svg><svg style="left:445px;top:911px;" width="15.5" height="11.5" viewBox="0 0 15.500 11.500"><text x="0" y="5.300" font-family="Liberation Sans" font-weight="700" font-size="7.400" fill="#44546a" textLength="15" lengthAdjust="spacingAndGlyphs">1010</text><text x="0" y="11.300" font-family="Liberation Sans" font-weight="700" font-size="7.400" fill="#44546a" textLength="14.500" lengthAdjust="spacingAndGlyphs">0101</text></svg><svg style="left:445px;top:937px;" width="15.5" height="11.5" viewBox="0 0 15.500 11.500"><text x="0" y="5.300" font-family="Liberation Sans" font-weight="700" font-size="7.400" fill="#44546a" textLength="15" lengthAdjust="spacingAndGlyphs">1010</text><text x="0" y="11.300" font-family="Liberation Sans" font-weight="700" font-size="7.400" fill="#44546a" textLength="14.500" lengthAdjust="spacingAndGlyphs">0101</text></svg><svg style="left:445px;top:963px;" width="15.5" height="11.5" viewBox="0 0 15.500 11.500"><text x="0" y="5.300" font-family="Liberation Sans" font-weight="700" font-size="7.400" fill="#44546a" textLength="15" lengthAdjust="spacingAndGlyphs">1010</text><text x="0" y="11.300" font-family="Liberation Sans" font-weight="700" font-size="7.400" fill="#44546a" textLength="14.500" lengthAdjust="spacingAndGlyphs">0101</text></svg><svg style="left:445px;top:989px;" width="15.5" height="11.5" viewBox="0 0 15.500 11.500"><text x="0" y="5.300" font-family="Liberation Sans" font-weight="700" font-size="7.400" fill="#44546a" textLength="15" lengthAdjust="spacingAndGlyphs">1010</text><text x="0" y="11.300" font-family="Liberation Sans" font-weight="700" font-size="7.400" fill="#44546a" textLength="14.500" lengthAdjust="spacingAndGlyphs">0101</text></svg><svg style="left:445px;top:1015px;" width="15.5" height="11.5" viewBox="0 0 15.500 11.500"><text x="0" y="5.300" font-family="Liberation Sans" font-weight="700" font-size="7.400" fill="#44546a" textLength="15" lengthAdjust="spacingAndGlyphs">1010</text><text x="0" y="11.300" font-family="Liberation Sans" font-weight="700" font-size="7.400" fill="#44546a" textLength="14.500" lengthAdjust="spacingAndGlyphs">0101</text></svg><svg style="left:445px;top:1041px;" width="15.5" height="11.5" viewBox="0 0 15.500 11.500"><text x="0" y="5.300" font-family="Liberation Sans" font-weight="700" font-size="7.400" fill="#44546a" textLength="15" lengthAdjust="spacingAndGlyphs">1010</text><text x="0" y="11.300" font-family="Liberation Sans" font-weight="700" font-size="7.400" fill="#44546a" textLength="14.500" lengthAdjust="spacingAndGlyphs">0101</text></svg><svg style="left:445px;top:1067px;" width="15.5" height="11.5" viewBox="0 0 15.500 11.500"><text x="0" y="5.300" font-family="Liberation Sans" font-weight="700" font-size="7.400" fill="#44546a" textLength="15" lengthAdjust="spacingAndGlyphs">1010</text><text x="0" y="11.300" font-family="Liberation Sans" font-weight="700" font-size="7.400" fill="#44546a" textLength="14.500" lengthAdjust="spacingAndGlyphs">0101</text></svg><svg style="left:445px;top:1093px;" width="15.5" height="11.5" viewBox="0 0 15.500 11.500"><text x="0" y="5.300" font-family="Liberation Sans" font-weight="700" font-size="7.400" fill="#44546a" textLength="15" lengthAdjust="spacingAndGlyphs">1010</text><text x="0" y="11.300" font-family="Liberation Sans" font-weight="700" font-size="7.400" fill="#44546a" textLength="14.500" lengthAdjust="spacingAndGlyphs">0101</text></svg><svg style="left:445px;top:1119px;" width="15.5" height="11.5" viewBox="0 0 15.500 11.500"><text x="0" y="5.300" font-family="Liberation Sans" font-weight="700" font-size="7.400" fill="#44546a" textLength="15" lengthAdjust="spacingAndGlyphs">1010</text><text x="0" y="11.300" font-family="Liberation Sans" font-weight="700" font-size="7.400" fill="#44546a" textLength="14.500" lengthAdjust="spacingAndGlyphs">0101</text></svg><svg style="left:445px;top:1145px;" width="15.5" height="11.5" viewBox="0 0 15.500 11.500"><text x="0" y="5.300" font-family="Liberation Sans" font-weight="700" font-size="7.400" fill="#44546a" textLength="15" lengthAdjust="spacingAndGlyphs">1010</text><text x="0" y="11.300" font-family="Liberation Sans" font-weight="700" font-size="7.400" fill="#44546a" textLength="14.500" lengthAdjust="spacingAndGlyphs">0101</text></svg><svg style="left:445px;top:1171px;" width="15.5" height="11.5" viewBox="0 0 15.500 11.500"><text x="0" y="5.300" font-family="Liberation Sans" font-weight="700" font-size="7.400" fill="#44546a" textLength="15" lengthAdjust="spacingAndGlyphs">1010</text><text x="0" y="11.300" font-family="Liberation Sans" font-weight="700" font-size="7.400" fill="#44546a" textLength="14.500" lengthAdjust="spacingAndGlyphs">0101</text></svg><svg style="left:445px;top:1197px;" width="15.5" height="11.5" viewBox="0 0 15.500 11.500"><text x="0" y="5.300" font-family="Liberation Sans" font-weight="700" font-size="7.400" fill="#44546a" textLength="15" lengthAdjust="spacingAndGlyphs">1010</text><text x="0" y="11.300" font-family="Liberation Sans" font-weight="700" font-size="7.400" fill="#44546a" textLength="14.500" lengthAdjust="spacingAndGlyphs">0101</text></svg><svg style="left:445px;top:1223px;" width="15.5" height="11.5" viewBox="0 0 15.500 11.500"><text x="0" y="5.300" font-family="Liberation Sans" font-weight="700" font-size="7.400" fill="#44546a" textLength="15" lengthAdjust="spacingAndGlyphs">1010</text><text x="0" y="11.300" font-family="Liberation Sans" font-weight="700" font-size="7.400" fill="#44546a" textLength="14.500" lengthAdjust="spacingAndGlyphs">0101</text></svg><svg style="left:445px;top:1249px;" width="15.5" height="11.5" viewBox="0 0 15.500 11.500"><text x="0" y="5.300" font-family="Liberation Sans" font-weight="700" font-size="7.400" fill="#44546a" textLength="15" lengthAdjust="spacingAndGlyphs">1010</text><text x="0" y="11.300" font-family="Liberation Sans" font-weight="700" font-size="7.400" fill="#44546a" textLength="14.500" lengthAdjust="spacingAndGlyphs">0101</text></svg><svg style="left:445px;top:1275px;" width="15.5" height="11.5" viewBox="0 0 15.500 11.500"><text x="0" y="5.300" font-family="Liberation Sans" font-weight="700" font-size="7.400" fill="#44546a" textLength="15" lengthAdjust="spacingAndGlyphs">1010</text><text x="0" y="11.300" font-family="Liberation Sans" font-weight="700" font-size="7.400" fill="#44546a" textLength="14.500" lengthAdjust="spacingAndGlyphs">0101</text></svg><svg style="left:445px;top:1301px;" width="15.5" height="2" viewBox="0 0 15.500 2"><text x="0" y="5.300" font-family="Liberation Sans" font-weight="700" font-size="7.400" fill="#44546a" textLength="15" lengthAdjust="spacingAndGlyphs">1010</text><text x="0" y="11.300" font-family="Liberation Sans" font-weight="700" font-size="7.400" fill="#44546a" textLength="14.500" lengthAdjust="spacingAndGlyphs">0101</text></svg><svg style="left:1469.5px;top:97.5px;" width="15.5" height="9.8" viewBox="0 0 15 9.500"><rect x="0.500" y="0.500" width="14" height="7" rx=".8" fill="#2fa86c" stroke="#1a7c4c" stroke-width=".8"/><rect x="1.800" y="2.200" width="3" height="2.400" fill="#6c3450"/><rect x="6" y="2.200" width="3" height="2.400" fill="#6c3450"/><rect x="10.200" y="2.200" width="3" height="2.400" fill="#6c3450"/><rect x="0.500" y="6.300" width="14" height="2.700" fill="#c89a2c"/><g fill="#fff8d0"><rect x="1.600" y="6.600" width="1.100" height="2.400"/><rect x="3.900" y="6.600" width="1.100" height="2.400"/><rect x="6.200" y="6.600" width="1.100" height="2.400"/><rect x="8.500" y="6.600" width="1.100" height="2.400"/><rect x="10.800" y="6.600" width="1.100" height="2.400"/><rect x="13" y="6.600" width="1.100" height="2.400"/></g></svg><svg style="left:1543.5px;top:97.5px;" width="16.5" height="10.5" viewBox="0 0 16.500 10.500"><g fill="#2424a4"><rect x="0" y="0.300" width="3.500" height="1.800"/><rect x="4.300" y="0.300" width="3.500" height="1.800"/><rect x="8.600" y="0.300" width="3" height="1.800"/><rect x="12.600" y="0.300" width="1.600" height="1.800"/><rect x="15" y="0.300" width="1.200" height="1.800"/><rect x="0" y="4.300" width="3.500" height="1.800"/><rect x="4.300" y="4.300" width="3.500" height="1.800"/><rect x="8.600" y="4.300" width="3" height="1.800"/><rect x="12.600" y="4.300" width="1.200" height="1.800"/><rect x="14.600" y="4.300" width="1" height="2.600"/></g><rect x="0" y="8.300" width="12" height="1.900" fill="#2c2cc8"/></svg><svg style="left:1699.5px;top:96px;" width="15" height="13" viewBox="0 0 15 13"><circle cx="4.500" cy="4" r="3.400" fill="#5aa0d8" stroke="#2a70b0" stroke-width=".9"/><circle cx="3.600" cy="3" r="1.300" fill="#b8dcf4"/><circle cx="11" cy="9" r="3.200" fill="#5aa0d8" stroke="#2a70b0" stroke-width=".9"/><circle cx="10.200" cy="8" r="1.200" fill="#b8dcf4"/></svg><svg style="left:1849px;top:95.5px;" width="16" height="14" viewBox="0 0 16 14"><g fill="none" stroke="#3a8cd0" stroke-width="1.300"><circle cx="3.800" cy="6.500" r="2.600"/><circle cx="10.200" cy="6.500" r="2.600"/><path d="M6.400 6q.8-.8 1.300 0M1.800 4.600q1-4 4.200-3.800M12.500 4.600q.5-3 3-2.800"/></g><path d="M5 10.500l2.400 2.400M7.400 10.500L5 12.900" stroke="#3a8cd0" stroke-width="1.100"/><rect x="9" y="10.300" width="4" height="1.100" fill="#3a8cd0"/><rect x="9" y="12.300" width="4" height="1.100" fill="#3a8cd0"/></svg><svg style="left:2017px;top:95.5px;" width="16" height="14" viewBox="0 0 16 14"><g fill="none" stroke="#3e6a98" stroke-width="1.300"><circle cx="3.800" cy="6.500" r="2.600"/><circle cx="10.200" cy="6.500" r="2.600"/><path d="M6.400 6q.8-.8 1.300 0M1.800 4.600q1-4 4.200-3.800M12.500 4.600q.5-3 3-2.800"/></g><path d="M5 10.500l2.400 2.400M7.400 10.500L5 12.900" stroke="#3e6a98" stroke-width="1.100"/><rect x="9" y="10.300" width="4" height="1.100" fill="#3e6a98"/><rect x="9" y="12.300" width="4" height="1.100" fill="#3e6a98"/></svg><svg style="left:2290px;top:88px;" width="16" height="15" viewBox="0 0 16 15"><path d="M2 13q0-3 2-5.500t1-6.500M6 2q3 4 1 9" fill="none" stroke="#c4c4c4" stroke-width="1.100"/><path d="M1 4l7 6" stroke="#c8c8c8" stroke-width="1"/><path d="M1.500 9h13v5h-13z" fill="#f4f4f4" stroke="#d4d4d4" stroke-width=".8"/><g fill="#cfcfcf"><rect x="3.500" y="11.500" width="2" height="1.500"/><rect x="7" y="11.500" width="2" height="1.500"/><rect x="10.500" y="11.500" width="2" height="1.500"/></g></svg><div style="left:2310px;top:84px;width:23px;height:21px;background:#cce4f7;border:1px solid #99ccf0;border-radius:2px;"></div><svg style="left:2313.5px;top:87px;" width="16" height="15" viewBox="0 0 16 15.500"><path d="M0.500 6.500h5v-2l3.500 3-3.500 3v-2h-5z" fill="#fcecb0" stroke="#c89828" stroke-width=".9"/><path d="M10.500 4v10.500M10.500 7.500h3M10.500 11.500h3M10.500 14.500h3" stroke="#3a5a9c" stroke-width="1.200" fill="none"/><path d="M10.500 0.500l2.600 3.500h-5.200z" fill="#3a5a9c"/><rect x="13" y="6" width="2.600" height="2.600" fill="#f8b0b0" stroke="#d03040" stroke-width=".9"/><rect x="13" y="10.200" width="2.600" height="2.600" fill="#f8b0b0" stroke="#d03040" stroke-width=".9"/></svg><svg style="left:2338px;top:89px;" width="13" height="13" viewBox="0 0 13 13"><rect x="0.500" y="0.500" width="9" height="9" fill="#eef4fc" stroke="#9cb4d8"/><rect x="3.500" y="3.500" width="9" height="9" fill="#fafcff" stroke="#7c9cd0"/><rect x="5.500" y="7.300" width="5" height="1.500" fill="#1c4a9c"/></svg><div style="left:2358px;top:86px;width:1px;height:18px;background:#a0a0a0;"></div><svg style="left:2367.5px;top:88.5px;" width="14" height="14" viewBox="0 0 14 14"><path d="M5 0.600h4v4.400h4.400v4h-4.400v4.400h-4v-4.400h-4.400v-4h4.400z" fill="#9ccc3c" stroke="#5c9a1c" stroke-width="1" stroke-linejoin="round"/><path d="M5.600 1.400h2.800v4.400h4.400v1h-12v-1h4.800z" fill="#c8e880" opacity=".75"/></svg><svg style="left:2391.5px;top:88.5px;" width="14" height="14" viewBox="0 0 14 14"><path d="M2.500 2.500l9 9M11.500 2.500l-9 9" stroke="#b8b8b8" stroke-width="3.600" stroke-linecap="round"/></svg><svg style="left:2414px;top:87px;" width="16" height="16" viewBox="0 0 16 16"><g stroke-linecap="round"><path d="M1.500 1.500l7 7M8.500 1.500l-7 7" stroke="#6c6c6c" stroke-width="3"/><path d="M1.500 1.500l7 7M8.500 1.500l-7 7" stroke="#e4e4e4" stroke-width="1.300"/><path d="M6.500 6.500l8 8M14.500 6.500l-8 8" stroke="#5c5c5c" stroke-width="3.300"/><path d="M6.500 6.500l8 8M14.500 6.500l-8 8" stroke="#848484" stroke-width="1.400"/></g></svg><div style="left:2435px;top:86px;width:1px;height:18px;background:#a0a0a0;"></div><svg style="left:2445px;top:87.5px;" width="15.5" height="14" viewBox="0 0 15.500 14"><rect x="0.500" y="2.500" width="12" height="11" fill="#fbfcf6" stroke="#a89860"/><rect x="1" y="3" width="11" height="2.400" fill="#4a88d8"/><path d="M12.500 0v6M9.800 2.800h5.400" stroke="#d8a420" stroke-width="2.600"/><path d="M12.500 .6v4.800M10.400 2.800h4.200" stroke="#fff4b0" stroke-width="1"/><path d="M5 13q5 0 7-5v5z" fill="#f6e8a8" opacity=".8"/></svg><svg style="left:2469px;top:88px;" width="15" height="14" viewBox="0 0 15 14"><rect x="0.500" y="4.500" width="11" height="9" fill="#f8fafe" stroke="#8c98b8"/><rect x="1" y="5" width="10" height="2.200" fill="#4a88d8"/><path d="M7 9.500l3-3.500 2.500 2-3.500 3z" fill="#a4a4a4" stroke="#6c6c6c" stroke-width=".8"/><path d="M11 2l3.500 2.500-1.800 1.800-3-2.500z" fill="#b8b8b8" stroke="#6c6c6c" stroke-width=".8"/><path d="M8 10.500l-2.500 2.500" stroke="#2a4a9c" stroke-width="1.100"/></svg><svg style="left:2495.5px;top:87.5px;" width="6" height="15" viewBox="0 0 6 15"><circle cx="3" cy="2.500" r="2" fill="#fafafa" stroke="#787878" stroke-width=".9"/><circle cx="3" cy="7.500" r="2" fill="#fafafa" stroke="#787878" stroke-width=".9"/><circle cx="3" cy="12.500" r="2" fill="#fafafa" stroke="#787878" stroke-width=".9"/></svg><svg style="left:1488.5px;top:159.5px;" width="16" height="11" viewBox="0 0 16 11"><text x="0" y="8.800" font-family="Liberation Sans" font-weight="700" font-size="10" fill="#2e3c58" stroke="#2e3c58" stroke-width=".3" textLength="11.500" lengthAdjust="spacingAndGlyphs">(x)</text><rect x="12" y="4" width="3.600" height="1.100" fill="#33415c"/><rect x="12" y="6.400" width="3.600" height="1.100" fill="#33415c"/></svg><svg style="left:1488.5px;top:185.5px;" width="16" height="11" viewBox="0 0 16 11"><text x="0" y="8.800" font-family="Liberation Sans" font-weight="700" font-size="10" fill="#2e3c58" stroke="#2e3c58" stroke-width=".3" textLength="11.500" lengthAdjust="spacingAndGlyphs">(x)</text><rect x="12" y="4" width="3.600" height="1.100" fill="#33415c"/><rect x="12" y="6.400" width="3.600" height="1.100" fill="#33415c"/></svg><svg style="left:1488.5px;top:211.5px;" width="16" height="11" viewBox="0 0 16 11"><text x="0" y="8.800" font-family="Liberation Sans" font-weight="700" font-size="10" fill="#2e3c58" stroke="#2e3c58" stroke-width=".3" textLength="11.500" lengthAdjust="spacingAndGlyphs">(x)</text><rect x="12" y="4" width="3.600" height="1.100" fill="#33415c"/><rect x="12" y="6.400" width="3.600" height="1.100" fill="#33415c"/></svg><svg style="left:1488.5px;top:237.5px;" width="16" height="11" viewBox="0 0 16 11"><text x="0" y="8.800" font-family="Liberation Sans" font-weight="700" font-size="10" fill="#2e3c58" stroke="#2e3c58" stroke-width=".3" textLength="11.500" lengthAdjust="spacingAndGlyphs">(x)</text><rect x="12" y="4" width="3.600" height="1.100" fill="#33415c"/><rect x="12" y="6.400" width="3.600" height="1.100" fill="#33415c"/></svg><svg style="left:1489px;top:263px;" width="13" height="13" viewBox="0 0 14 14"><path d="M5 0.600h4v4.400h4.400v4h-4.400v4.400h-4v-4.400h-4.400v-4h4.400z" fill="#9ccc3c" stroke="#5c9a1c" stroke-width="1" stroke-linejoin="round"/><path d="M5.600 1.400h2.800v4.400h4.400v1h-12v-1h4.800z" fill="#c8e880" opacity=".75"/></svg><svg style="left:2421.5px;top:60.5px;" width="15" height="15" viewBox="0 0 15 15"><circle cx="5.500" cy="5.500" r="4.200" fill="#f4f4f4" stroke="#8c8c8c" stroke-width="2"/><path d="M8.500 8.500l5.500 5.500" stroke="#8c8c8c" stroke-width="2.200"/></svg><svg style="left:2452px;top:61px;" width="2" height="14" viewBox="0 0 2 14"><rect x="0" y="0" width="1.600" height="1.600" fill="#c4b59d"/><rect x="0" y="4" width="1.600" height="1.600" fill="#c4b59d"/><rect x="0" y="8" width="1.600" height="1.600" fill="#c4b59d"/><rect x="0" y="12" width="1.600" height="1.600" fill="#c4b59d"/></svg><svg style="left:2459.5px;top:60px;" width="16" height="16" viewBox="0 0 16 16"><rect x="0.500" y="5.500" width="12" height="9" fill="#f8fafc" stroke="#a89860"/><rect x="1" y="6" width="11" height="2.200" fill="#4a88d8"/><path d="M1 11h11M6.500 8.500v6" stroke="#c8b888" stroke-width=".8"/><path d="M12 0.500l1 2.500 2.500.500-2 1.500.500 2.500-2-1.500-2 1.500.500-2.500-2-1.500 2.500-.500z" fill="#fff0a0" stroke="#d0a020" stroke-width=".8"/></svg><div style="left:2481px;top:59px;width:1px;height:18px;background:#8c8c8c;"></div><svg style="left:2490.5px;top:59.5px;" width="16" height="16" viewBox="0 0 16 16"><rect x="0.500" y="0.500" width="11" height="9" fill="#f8fafe" stroke="#6c88b8"/><rect x="1" y="1" width="10" height="2.200" fill="#2a68c8"/><path d="M1 6h10M5 3.500v6" stroke="#9cb0d0" stroke-width=".8"/><rect x="6.500" y="7.500" width="9" height="8" fill="#fdfdfd" stroke="#a89860"/><text x="8.500" y="14.500" font-family="Liberation Sans" font-weight="700" font-size="8" fill="#2a58b8">c</text></svg><div style="left:2513px;top:60px;width:16px;height:16px;background:#35abe2;"></div><span class="t" style="left:2515.5px;top:63.01px;height:11px;line-height:11px;font-size:8.5px;color:#fff;font-weight:700;transform:scaleX(0.9020);transform-origin:0 0;">MX</span><div style="left:2533px;top:57px;width:23px;height:21px;background:#cce4f7;border:1px solid #99ccf0;border-radius:3px;"></div><svg style="left:2536.5px;top:59.5px;" width="16" height="16" viewBox="0 0 16 16"><g stroke="#2f8a84" stroke-width="1" fill="none" stroke-linecap="round"><path d="M7 5.500L5.500 1.500M9.500 5.500L11 1.800M5 7.500L1.500 5.500l-1 .8M4.800 9.500H1.200l-.7 1M5.500 11.500L3 14l.2 1.300M11 7.500l3-1.500 1 .6M11.300 9.500l3.200.5.800 1.200M10.500 11.500l2 2.500 1.300.300"/></g><ellipse cx="8" cy="9" rx="3" ry="4.100" transform="rotate(-20 8 9)" fill="#a9cf8e" stroke="#2a7f86" stroke-width="1.100"/><path d="M6.300 7.500q1.200-1.800 3-.800" stroke="#e6f4d8" stroke-width=".9" fill="none"/></svg><div style="left:1456px;top:65px;width:1057px;height:247px;border:5px solid #ed1c24;"></div><svg style="left:1138px;top:160px;" width="260" height="96" viewBox="0 0 260 96"><path d="M6.5 28.7H128.5V8.2L250.3 48.3L128.5 88.5V68.5H6.5Z" fill="none" stroke="#ed1c24" stroke-width="4.7" stroke-linejoin="round"/></svg></div></body></html>
